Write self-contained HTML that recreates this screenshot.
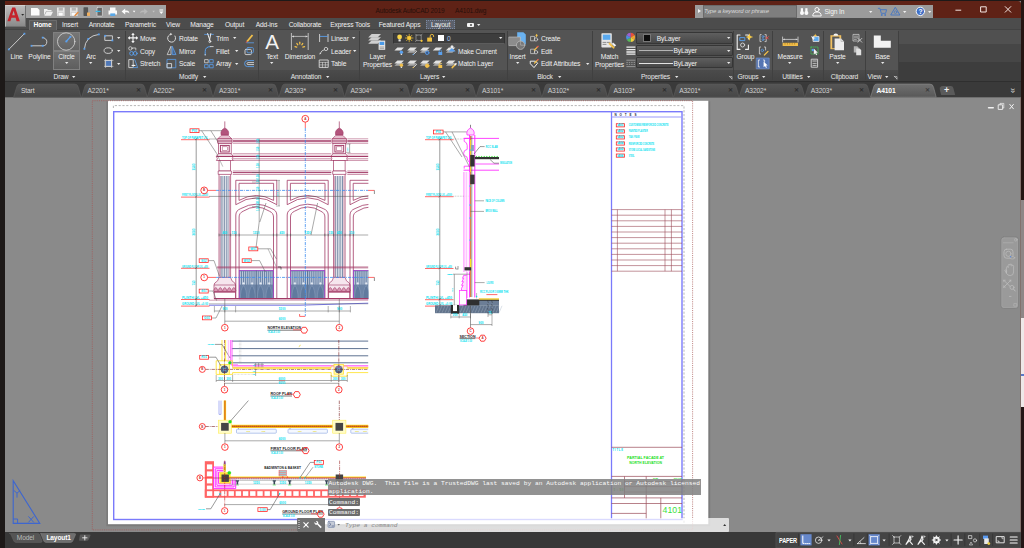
<!DOCTYPE html>
<html lang="en">
<head>
<meta charset="utf-8">
<title>Autodesk AutoCAD 2019 - A4101.dwg</title>
<style>
*{box-sizing:border-box;margin:0;padding:0}
html,body{width:1024px;height:548px;overflow:hidden;background:#1d1918}
body{position:relative;font-family:"Liberation Sans",sans-serif;font-size:7px;color:#e6e6e6;line-height:1}
.a{position:absolute;display:block}
.t{position:absolute;white-space:nowrap;line-height:9px;height:9px;font-size:6.7px;color:#f0f0f0;letter-spacing:-0.14px}
.tc{transform:translateX(-50%)}
.pt{color:#e8e8e8}
.sep{position:absolute;top:31px;width:1px;height:49px;background:#404040}
.dd{position:absolute;height:12px;background:#3b3b3b;border:1px solid #303030;border-radius:1px}
.arr{position:absolute;width:0;height:0;border-left:1.6px solid transparent;border-right:1.6px solid transparent;border-top:1.9px solid #e8e8e8}
svg{position:absolute;left:0;top:0;overflow:visible}
.mono{font-family:"Liberation Mono","DejaVu Sans Mono",monospace}
</style>
</head>
<body>
<div class="a" style="left:4.5px;top:1px;width:1016.5px;height:547px;background:#8a8a8a;"></div>
<div class="a" style="left:4.5px;top:1px;width:1016.5px;height:18px;background:#5f2216;border-radius:0 3px 0 0"></div>
<div class="a" style="left:26px;top:5px;width:140px;height:13px;background:#a2a2a2;"></div>
<div class="a" style="left:4.5px;top:18px;width:1016.5px;height:11px;background:#4c4c4c;"></div>
<div class="a" style="left:4.5px;top:29px;width:1016.5px;height:53px;background:#545454;"></div>
<div class="a" style="left:4.5px;top:29px;width:1016.5px;height:1px;background:#434343;"></div>
<div class="a" style="left:4.5px;top:70px;width:893.5px;height:12px;background:linear-gradient(#4b4b4b,#424242);"></div>
<div class="a" style="left:898px;top:30px;width:123px;height:14px;background:#505050;"></div>
<div class="a" style="left:898px;top:44px;width:123px;height:18px;background:#464646;"></div>
<div class="a" style="left:898px;top:62px;width:123px;height:20px;background:#3d3d3d;"></div>
<div class="a" style="left:4.5px;top:81px;width:1016.5px;height:1px;background:#2f2f2f;"></div>
<div class="a" style="left:4.5px;top:82px;width:1016.5px;height:15px;background:#3a3a3a;"></div>
<div class="a" style="left:4.5px;top:97px;width:1016.5px;height:1px;background:#6f6f6f;"></div>
<div class="a" style="left:4.5px;top:532.3px;width:1016.5px;height:15.7px;background:#383838;"></div>
<div class="a" style="left:5px;top:5.4px;width:21.4px;height:21.8px;background:linear-gradient(#bdbdbd,#8a8a8a);border:1px solid #707070;border-top-color:#d0d0d0;border-left-color:#c0c0c0"></div>
<span class="t " style="left:375.5px;top:6.0px;color:#26100b;font-size:6.5px">Autodesk AutoCAD 2019</span>
<span class="t " style="left:455px;top:6.0px;color:#26100b;font-size:6.5px">A4101.dwg</span>
<div class="a" style="left:695px;top:5px;width:8px;height:13px;background:#9c9c9c;"></div>
<div class="a" style="left:702.5px;top:5px;width:94.5px;height:13px;background:#7e7e7e;border:1px solid #6a6a6a"></div>
<div class="a" style="left:797px;top:5px;width:136px;height:13px;background:#9b9b9b;"></div>
<i class="a" style="left:697.5px;top:9px;border-left:3px solid #f2f2f2;border-top:2.5px solid transparent;border-bottom:2.5px solid transparent"></i>
<span class="t " style="left:704px;top:6.5px;font-style:italic;color:#d8d8d8;font-size:5.95px">Type a keyword or phrase</span>
<span class="t " style="left:824.5px;top:6.5px;color:#f4f4f4">Sign In</span>
<svg style="left:869.3px;top:10.5px" width="4" height="3" viewBox="0 0 4 3"><path d="M0 0 H3.4 L1.7 2.1 Z" fill="#f0f0f0"/></svg>
<svg style="left:902.8px;top:10.5px" width="4" height="3" viewBox="0 0 4 3"><path d="M0 0 H3.4 L1.7 2.1 Z" fill="#f0f0f0"/></svg>
<svg style="left:928.3px;top:10.5px" width="4" height="3" viewBox="0 0 4 3"><path d="M0 0 H3.4 L1.7 2.1 Z" fill="#f0f0f0"/></svg>
<div class="a" style="left:29px;top:20px;width:28px;height:10px;background:#5a5a5a;border:1px solid #6c6c6c;border-bottom:0;border-radius:1px 1px 0 0"></div>
<div class="a" style="left:426px;top:20px;width:29px;height:9px;background:#5b606b;border:1px dotted #7d8aa2"></div>
<span class="t tc " style="left:42.5px;top:20.0px;font-weight:bold;color:#fff">Home</span>
<span class="t tc " style="left:70px;top:20.0px;">Insert</span>
<span class="t tc " style="left:101.5px;top:20.0px;">Annotate</span>
<span class="t tc " style="left:140.5px;top:20.0px;">Parametric</span>
<span class="t tc " style="left:173px;top:20.0px;">View</span>
<span class="t tc " style="left:202px;top:20.0px;">Manage</span>
<span class="t tc " style="left:234.5px;top:20.0px;">Output</span>
<span class="t tc " style="left:266.5px;top:20.0px;">Add-ins</span>
<span class="t tc " style="left:305px;top:20.0px;">Collaborate</span>
<span class="t tc " style="left:350px;top:20.0px;">Express Tools</span>
<span class="t tc " style="left:399.5px;top:20.0px;">Featured Apps</span>
<span class="t tc " style="left:440.5px;top:20.0px;">Layout</span>
<div class="a" style="left:467px;top:22.5px;width:7px;height:4.5px;background:#f4f4f4;border-radius:1px"></div>
<div class="a" style="left:469.5px;top:24px;width:2px;height:1.5px;background:#4b4b4b;border-radius:1px"></div>
<svg style="left:476.8px;top:24.0px" width="4" height="3" viewBox="0 0 4 3"><path d="M0 0 H3.4 L1.7 2.1 Z" fill="#e8e8e8"/></svg>
<i class="sep" style="left:125px"></i>
<i class="sep" style="left:258px"></i>
<i class="sep" style="left:359px"></i>
<i class="sep" style="left:507px"></i>
<i class="sep" style="left:592px"></i>
<i class="sep" style="left:733px"></i>
<i class="sep" style="left:772px"></i>
<i class="sep" style="left:823px"></i>
<i class="sep" style="left:865px"></i>
<i class="sep" style="left:898px"></i>
<span class="t tc pt" style="left:61px;top:72.0px;">Draw</span>
<svg style="left:71.8px;top:76.0px" width="4" height="3" viewBox="0 0 4 3"><path d="M0 0 H3.4 L1.7 2.1 Z" fill="#e8e8e8"/></svg>
<span class="t tc pt" style="left:188.5px;top:72.0px;">Modify</span>
<svg style="left:202.8px;top:76.0px" width="4" height="3" viewBox="0 0 4 3"><path d="M0 0 H3.4 L1.7 2.1 Z" fill="#e8e8e8"/></svg>
<span class="t tc pt" style="left:306px;top:72.0px;">Annotation</span>
<svg style="left:325.8px;top:76.0px" width="4" height="3" viewBox="0 0 4 3"><path d="M0 0 H3.4 L1.7 2.1 Z" fill="#e8e8e8"/></svg>
<span class="t tc pt" style="left:429.5px;top:72.0px;">Layers</span>
<svg style="left:441.8px;top:76.0px" width="4" height="3" viewBox="0 0 4 3"><path d="M0 0 H3.4 L1.7 2.1 Z" fill="#e8e8e8"/></svg>
<span class="t tc pt" style="left:545px;top:72.0px;">Block</span>
<svg style="left:557.8px;top:76.0px" width="4" height="3" viewBox="0 0 4 3"><path d="M0 0 H3.4 L1.7 2.1 Z" fill="#e8e8e8"/></svg>
<span class="t tc pt" style="left:655.5px;top:72.0px;">Properties</span>
<svg style="left:674.8px;top:76.0px" width="4" height="3" viewBox="0 0 4 3"><path d="M0 0 H3.4 L1.7 2.1 Z" fill="#e8e8e8"/></svg>
<span class="t tc pt" style="left:748px;top:72.0px;">Groups</span>
<svg style="left:761.8px;top:76.0px" width="4" height="3" viewBox="0 0 4 3"><path d="M0 0 H3.4 L1.7 2.1 Z" fill="#e8e8e8"/></svg>
<span class="t tc pt" style="left:792.5px;top:72.0px;">Utilities</span>
<svg style="left:806.8px;top:76.0px" width="4" height="3" viewBox="0 0 4 3"><path d="M0 0 H3.4 L1.7 2.1 Z" fill="#e8e8e8"/></svg>
<span class="t tc pt" style="left:844.5px;top:72.0px;">Clipboard</span>
<span class="t tc pt" style="left:874.5px;top:72.0px;">View</span>
<svg style="left:884.8px;top:76.0px" width="4" height="3" viewBox="0 0 4 3"><path d="M0 0 H3.4 L1.7 2.1 Z" fill="#e8e8e8"/></svg>
<div class="a" style="left:53px;top:32px;width:27px;height:19px;background:linear-gradient(#767676,#636363);border:1px solid #808080"></div>
<div class="a" style="left:53px;top:51px;width:27px;height:19px;background:linear-gradient(#707070,#5e5e5e);border:1px solid #808080"></div>
<span class="t tc " style="left:16.5px;top:52.0px;">Line</span>
<span class="t tc " style="left:39.5px;top:52.0px;">Polyline</span>
<span class="t tc " style="left:66.5px;top:52.0px;">Circle</span>
<span class="t tc " style="left:91px;top:52.0px;">Arc</span>
<svg style="left:64.8px;top:61.5px" width="4" height="3" viewBox="0 0 4 3"><path d="M0 0 H3.4 L1.7 2.1 Z" fill="#e8e8e8"/></svg>
<svg style="left:89.3px;top:61.5px" width="4" height="3" viewBox="0 0 4 3"><path d="M0 0 H3.4 L1.7 2.1 Z" fill="#e8e8e8"/></svg>
<svg style="left:116.8px;top:37.1px" width="4" height="3" viewBox="0 0 4 3"><path d="M0 0 H3.4 L1.7 2.1 Z" fill="#e8e8e8"/></svg>
<svg style="left:116.8px;top:50.0px" width="4" height="3" viewBox="0 0 4 3"><path d="M0 0 H3.4 L1.7 2.1 Z" fill="#e8e8e8"/></svg>
<svg style="left:116.8px;top:62.6px" width="4" height="3" viewBox="0 0 4 3"><path d="M0 0 H3.4 L1.7 2.1 Z" fill="#e8e8e8"/></svg>
<span class="t " style="left:140px;top:33.6px;">Move</span>
<span class="t " style="left:140px;top:46.5px;">Copy</span>
<span class="t " style="left:140px;top:59.1px;">Stretch</span>
<span class="t " style="left:179px;top:33.6px;">Rotate</span>
<span class="t " style="left:179px;top:46.5px;">Mirror</span>
<span class="t " style="left:179px;top:59.1px;">Scale</span>
<span class="t " style="left:216px;top:33.6px;">Trim</span>
<svg style="left:233.3px;top:37.1px" width="4" height="3" viewBox="0 0 4 3"><path d="M0 0 H3.4 L1.7 2.1 Z" fill="#e8e8e8"/></svg>
<span class="t " style="left:216px;top:46.5px;">Fillet</span>
<svg style="left:234.8px;top:50.0px" width="4" height="3" viewBox="0 0 4 3"><path d="M0 0 H3.4 L1.7 2.1 Z" fill="#e8e8e8"/></svg>
<span class="t " style="left:216px;top:59.1px;">Array</span>
<svg style="left:234.8px;top:62.6px" width="4" height="3" viewBox="0 0 4 3"><path d="M0 0 H3.4 L1.7 2.1 Z" fill="#e8e8e8"/></svg>
<span class="t tc " style="left:272px;top:52.0px;">Text</span>
<svg style="left:270.3px;top:61.5px" width="4" height="3" viewBox="0 0 4 3"><path d="M0 0 H3.4 L1.7 2.1 Z" fill="#e8e8e8"/></svg>
<span class="t tc " style="left:300px;top:52.0px;">Dimension</span>
<span class="t " style="left:331px;top:33.6px;">Linear</span>
<svg style="left:351.8px;top:37.1px" width="4" height="3" viewBox="0 0 4 3"><path d="M0 0 H3.4 L1.7 2.1 Z" fill="#e8e8e8"/></svg>
<span class="t " style="left:331px;top:46.5px;">Leader</span>
<svg style="left:353.3px;top:50.0px" width="4" height="3" viewBox="0 0 4 3"><path d="M0 0 H3.4 L1.7 2.1 Z" fill="#e8e8e8"/></svg>
<span class="t " style="left:331px;top:59.1px;">Table</span>
<span class="t tc" style="left:272px;top:31.6px;font-size:20.6px;line-height:20px;height:20px;color:#f2f2f2">A</span>
<span class="t tc " style="left:377.5px;top:52.0px;">Layer</span>
<span class="t tc " style="left:377.5px;top:60.0px;">Properties</span>
<i class="dd" style="left:393px;top:32.6px;width:111.6px;height:11px;background:#3d3d3d;border-color:#333 #333 #5c5c5c #333"></i>
<div class="a" style="left:437.8px;top:34.8px;width:6.6px;height:6.6px;background:#fff;"></div>
<span class="t " style="left:447px;top:33.6px;color:#a8c8f0">0</span>
<svg style="left:499.0px;top:37.3px" width="4" height="3" viewBox="0 0 4 3"><path d="M0 0 H3.4 L1.7 2.1 Z" fill="#e8e8e8"/></svg>
<span class="t " style="left:458px;top:46.5px;">Make Current</span>
<span class="t " style="left:458px;top:59.1px;">Match Layer</span>
<span class="t tc " style="left:517.5px;top:52.0px;">Insert</span>
<svg style="left:515.8px;top:61.5px" width="4" height="3" viewBox="0 0 4 3"><path d="M0 0 H3.4 L1.7 2.1 Z" fill="#e8e8e8"/></svg>
<span class="t " style="left:541px;top:33.6px;">Create</span>
<span class="t " style="left:541px;top:46.5px;">Edit</span>
<span class="t " style="left:541px;top:59.1px;">Edit Attributes</span>
<svg style="left:585.8px;top:62.6px" width="4" height="3" viewBox="0 0 4 3"><path d="M0 0 H3.4 L1.7 2.1 Z" fill="#e8e8e8"/></svg>
<span class="t tc " style="left:609.5px;top:52.0px;">Match</span>
<span class="t tc " style="left:609.5px;top:60.0px;">Properties</span>
<i class="dd" style="left:636.4px;top:32.4px;width:96.6px;height:11.2px;background:linear-gradient(#5f5f5f,#484848);border-color:#363636"></i>
<svg style="left:727.3px;top:37.4px" width="4" height="3" viewBox="0 0 4 3"><path d="M0 0 H3.4 L1.7 2.1 Z" fill="#e8e8e8"/></svg>
<i class="dd" style="left:636.4px;top:44.8px;width:96.6px;height:11.2px;background:linear-gradient(#5f5f5f,#484848);border-color:#363636"></i>
<svg style="left:727.3px;top:49.8px" width="4" height="3" viewBox="0 0 4 3"><path d="M0 0 H3.4 L1.7 2.1 Z" fill="#e8e8e8"/></svg>
<i class="dd" style="left:636.4px;top:57.2px;width:96.6px;height:11.2px;background:linear-gradient(#5f5f5f,#484848);border-color:#363636"></i>
<svg style="left:727.3px;top:62.2px" width="4" height="3" viewBox="0 0 4 3"><path d="M0 0 H3.4 L1.7 2.1 Z" fill="#e8e8e8"/></svg>
<div class="a" style="left:643.4px;top:33.8px;width:8px;height:8.2px;background:#0c0c0c;border:1px solid #777"></div>
<span class="t " style="left:656.8px;top:33.7px;">ByLayer</span>
<span class="t " style="left:673.4px;top:46.0px;">ByLayer</span>
<span class="t " style="left:673.4px;top:58.7px;">ByLayer</span>
<div class="a" style="left:638.6px;top:49.8px;width:34px;height:1.4px;background:#b4b4b4;"></div>
<div class="a" style="left:638.6px;top:62.8px;width:34px;height:0.9px;background:#e4e4e4;"></div>
<span class="t tc " style="left:745.5px;top:52.0px;">Group</span>
<span class="t tc " style="left:790px;top:52.0px;">Measure</span>
<svg style="left:788.3px;top:61.5px" width="4" height="3" viewBox="0 0 4 3"><path d="M0 0 H3.4 L1.7 2.1 Z" fill="#e8e8e8"/></svg>
<span class="t tc " style="left:837.5px;top:52.0px;">Paste</span>
<svg style="left:835.8px;top:61.5px" width="4" height="3" viewBox="0 0 4 3"><path d="M0 0 H3.4 L1.7 2.1 Z" fill="#e8e8e8"/></svg>
<span class="t tc " style="left:882.5px;top:52.0px;">Base</span>
<svg style="left:880.8px;top:61.5px" width="4" height="3" viewBox="0 0 4 3"><path d="M0 0 H3.4 L1.7 2.1 Z" fill="#e8e8e8"/></svg>
<svg width="0" height="0"><defs><linearGradient id="tgI" x1="0" y1="0" x2="0" y2="1"><stop offset="0" stop-color="#565656"/><stop offset="1" stop-color="#464646"/></linearGradient><linearGradient id="tgA" x1="0" y1="0" x2="0" y2="1"><stop offset="0" stop-color="#707070"/><stop offset="1" stop-color="#585858"/></linearGradient></defs></svg>
<svg width="1024" height="100" viewBox="0 0 1024 100"><path d="M13.6 97.2 L17.0 86 Q17.6 84 20.0 84 H74.4 Q77.80000000000001 84 78.4 87.4 L81.0 97.2 Z" fill="url(#tgI)" stroke="#5c5c5c" stroke-width=".6"/></svg>
<span class="t " style="left:21px;top:86.0px;color:#dadada">Start</span>
<svg width="1024" height="100" viewBox="0 0 1024 100"><path d="M81.6 97.2 L85.0 86 Q85.6 84 88.0 84 H140.6 Q144.0 84 144.6 87.4 L147.2 97.2 Z" fill="url(#tgI)" stroke="#5c5c5c" stroke-width=".6"/></svg>
<span class="t " style="left:87.5px;top:86.0px;color:#cfcfcf">A2201*</span>
<span class="t " style="left:136.0px;top:86.0px;font-size:5.5px;color:#2c2c2c;font-weight:bold">✕</span>
<svg width="1024" height="100" viewBox="0 0 1024 100"><path d="M147.3 97.2 L150.70000000000002 86 Q151.3 84 153.70000000000002 84 H206.3 Q209.70000000000002 84 210.3 87.4 L212.9 97.2 Z" fill="url(#tgI)" stroke="#5c5c5c" stroke-width=".6"/></svg>
<span class="t " style="left:153.2px;top:86.0px;color:#cfcfcf">A2202*</span>
<span class="t " style="left:201.8px;top:86.0px;font-size:5.5px;color:#2c2c2c;font-weight:bold">✕</span>
<svg width="1024" height="100" viewBox="0 0 1024 100"><path d="M213.1 97.2 L216.5 86 Q217.1 84 219.5 84 H272.1 Q275.5 84 276.1 87.4 L278.70000000000005 97.2 Z" fill="url(#tgI)" stroke="#5c5c5c" stroke-width=".6"/></svg>
<span class="t " style="left:219.0px;top:86.0px;color:#cfcfcf">A2301*</span>
<span class="t " style="left:267.5px;top:86.0px;font-size:5.5px;color:#2c2c2c;font-weight:bold">✕</span>
<svg width="1024" height="100" viewBox="0 0 1024 100"><path d="M278.9 97.2 L282.29999999999995 86 Q282.9 84 285.29999999999995 84 H337.9 Q341.29999999999995 84 341.9 87.4 L344.5 97.2 Z" fill="url(#tgI)" stroke="#5c5c5c" stroke-width=".6"/></svg>
<span class="t " style="left:284.8px;top:86.0px;color:#cfcfcf">A2303*</span>
<span class="t " style="left:333.2px;top:86.0px;font-size:5.5px;color:#2c2c2c;font-weight:bold">✕</span>
<svg width="1024" height="100" viewBox="0 0 1024 100"><path d="M344.6 97.2 L348.0 86 Q348.6 84 351.0 84 H403.6 Q407.0 84 407.6 87.4 L410.20000000000005 97.2 Z" fill="url(#tgI)" stroke="#5c5c5c" stroke-width=".6"/></svg>
<span class="t " style="left:350.5px;top:86.0px;color:#cfcfcf">A2304*</span>
<span class="t " style="left:399.0px;top:86.0px;font-size:5.5px;color:#2c2c2c;font-weight:bold">✕</span>
<svg width="1024" height="100" viewBox="0 0 1024 100"><path d="M410.4 97.2 L413.79999999999995 86 Q414.4 84 416.79999999999995 84 H469.4 Q472.79999999999995 84 473.4 87.4 L476.0 97.2 Z" fill="url(#tgI)" stroke="#5c5c5c" stroke-width=".6"/></svg>
<span class="t " style="left:416.2px;top:86.0px;color:#cfcfcf">A2305*</span>
<span class="t " style="left:464.8px;top:86.0px;font-size:5.5px;color:#2c2c2c;font-weight:bold">✕</span>
<svg width="1024" height="100" viewBox="0 0 1024 100"><path d="M476.1 97.2 L479.5 86 Q480.1 84 482.5 84 H535.1 Q538.5 84 539.1 87.4 L541.7 97.2 Z" fill="url(#tgI)" stroke="#5c5c5c" stroke-width=".6"/></svg>
<span class="t " style="left:482.0px;top:86.0px;color:#cfcfcf">A3101*</span>
<span class="t " style="left:530.5px;top:86.0px;font-size:5.5px;color:#2c2c2c;font-weight:bold">✕</span>
<svg width="1024" height="100" viewBox="0 0 1024 100"><path d="M541.9 97.2 L545.3 86 Q545.9 84 548.3 84 H600.9 Q604.3 84 604.9 87.4 L607.5 97.2 Z" fill="url(#tgI)" stroke="#5c5c5c" stroke-width=".6"/></svg>
<span class="t " style="left:547.8px;top:86.0px;color:#cfcfcf">A3102*</span>
<span class="t " style="left:596.2px;top:86.0px;font-size:5.5px;color:#2c2c2c;font-weight:bold">✕</span>
<svg width="1024" height="100" viewBox="0 0 1024 100"><path d="M607.6 97.2 L611.0 86 Q611.6 84 614.0 84 H666.6 Q670.0 84 670.6 87.4 L673.2 97.2 Z" fill="url(#tgI)" stroke="#5c5c5c" stroke-width=".6"/></svg>
<span class="t " style="left:613.5px;top:86.0px;color:#cfcfcf">A3103*</span>
<span class="t " style="left:662.0px;top:86.0px;font-size:5.5px;color:#2c2c2c;font-weight:bold">✕</span>
<svg width="1024" height="100" viewBox="0 0 1024 100"><path d="M673.4 97.2 L676.8 86 Q677.4 84 679.8 84 H732.4 Q735.8 84 736.4 87.4 L739.0 97.2 Z" fill="url(#tgI)" stroke="#5c5c5c" stroke-width=".6"/></svg>
<span class="t " style="left:679.2px;top:86.0px;color:#cfcfcf">A3201*</span>
<span class="t " style="left:727.8px;top:86.0px;font-size:5.5px;color:#2c2c2c;font-weight:bold">✕</span>
<svg width="1024" height="100" viewBox="0 0 1024 100"><path d="M739.1 97.2 L742.5 86 Q743.1 84 745.5 84 H798.1 Q801.5 84 802.1 87.4 L804.7 97.2 Z" fill="url(#tgI)" stroke="#5c5c5c" stroke-width=".6"/></svg>
<span class="t " style="left:745.0px;top:86.0px;color:#cfcfcf">A3202*</span>
<span class="t " style="left:793.5px;top:86.0px;font-size:5.5px;color:#2c2c2c;font-weight:bold">✕</span>
<svg width="1024" height="100" viewBox="0 0 1024 100"><path d="M804.9 97.2 L808.3 86 Q808.9 84 811.3 84 H863.9 Q867.3 84 867.9 87.4 L870.5 97.2 Z" fill="url(#tgI)" stroke="#5c5c5c" stroke-width=".6"/></svg>
<span class="t " style="left:810.8px;top:86.0px;color:#cfcfcf">A3203*</span>
<span class="t " style="left:859.2px;top:86.0px;font-size:5.5px;color:#2c2c2c;font-weight:bold">✕</span>
<svg width="1024" height="100" viewBox="0 0 1024 100"><path d="M870.6 97.2 L874.0 86 Q874.6 84 877.0 84 H929.6 Q933.0 84 933.6 87.4 L936.2 97.2 Z" fill="url(#tgA)" stroke="#8c8c8c" stroke-width=".6"/></svg>
<span class="t " style="left:876.5px;top:86.0px;color:#fff;font-weight:bold">A4101</span>
<span class="t " style="left:925.0px;top:86.0px;font-size:5.5px;color:#3a3a3a;font-weight:bold">✕</span>
<i class="a" style="left:940px;top:86px;width:14px;height:9px;background:#5a5a5a;border-radius:4px 2px 0 0;transform:skewX(15deg)"></i>
<span class="t " style="left:944px;top:86.0px;font-size:9px;font-weight:bold;color:#eee">+</span>
<span class="t " style="left:1010px;top:85.5px;font-size:9px;color:#ddd;transform:rotate(90deg)">»</span>
<svg width="1024" height="100" viewBox="0 0 1024 100" fill="none" stroke-linecap="round" stroke-linejoin="round">
<path d="M7.4 21.2 L12.2 7.6 L15.2 7.6 L19.8 21.2 L16.6 21.2 L15.6 17.8 L11.4 17.8 L10.4 21.2 Z M12.2 15.2 L14.9 15.2 L13.6 10.8 Z" fill="#c4242c" fill-rule="evenodd"/>
<path d="M21.2 14 l3 0 l-1.5 1.8 z" fill="#2a2a2a"/>
<g fill="#fbfbfb">
<path d="M31 8 h6.5 l2 2 v5.5 h-8.5 z"/>
<path d="M44 9 h3 l1 1 h3.5 v1.2 h-5.5 l-2 4.3 z M46.6 11.8 h6.4 l-2 3.9 h-6.6 z" fill="#f0f0f0"/>
<rect x="57" y="7.5" width="7.6" height="8.5" fill="#e6e6e6"/><rect x="58.7" y="7.5" width="4.2" height="3.1" fill="#b4b4b4"/><rect x="58.5" y="12.4" width="4.6" height="3.6" fill="#fdfdfd" stroke="#b0b0b0" stroke-width=".5"/>
<rect x="70" y="7.5" width="7.6" height="8.5" fill="#e2e2e2"/><rect x="71.7" y="7.5" width="4.2" height="3.1" fill="#b4b4b4"/><rect x="71.5" y="12.4" width="4.6" height="3.6" fill="#fbfbfb" stroke="#b0b0b0" stroke-width=".5"/>
</g>
<path d="M75 15.5 l3 -3" stroke="#e88a3a" stroke-width="1.4"/>
<rect x="83.5" y="7.3" width="4.6" height="8.6" rx=".6" fill="#555"/><rect x="87" y="12.5" width="3" height="3.4" fill="#f0b060"/>
<rect x="97" y="7.3" width="5.4" height="8.8" rx=".7" fill="#666" stroke="#ddd" stroke-width=".7"/><path d="M96 11.3 h4" stroke="#38b6e8" stroke-width="1.3"/>
<path d="M108.5 10.5 h8.5 v4 h-8.5 z M110 7.5 h5.5 v3 h-5.5 z" fill="#fafafa"/><rect x="110.3" y="13.4" width="4.9" height="2.6" fill="#58a8e8"/>
<path d="M121.6 11.6 l3.6 -3 v2 h1.5 q2.6 0 2.6 3 q-.8 -1.3 -2.6 -1.3 h-1.5 v2.2 z" fill="#fbfbfb"/>
<path d="M147.8 11.6 l-3.6 -3 v2 h-1.5 q-2.6 0 -2.6 3 q.8 -1.3 2.6 -1.3 h1.5 v2.2 z" fill="#b8b8b8"/>
<path d="M132.8 10.8 h2.6 l-1.3 1.7 z" fill="#fff"/><path d="M152.3 10.8 h2.6 l-1.3 1.7 z" fill="#c4c4c4"/>
<path d="M159.4 9.6 h3.8 v.9 h-3.8 z M159.2 11.5 h4.2 l-2.1 2.6 z" fill="#fdfdfd"/>
<g fill="#fafafa"><circle cx="802" cy="13" r="2"/><circle cx="806.4" cy="13" r="2"/><rect x="800.8" y="8.2" width="2.2" height="4"/><rect x="805.3" y="8.2" width="2.2" height="4"/></g>
<circle cx="817" cy="9.6" r="2.1" stroke="#fff" stroke-width=".9"/><path d="M812.8 15.6 q0 -3.6 4.2 -3.6 q4.2 0 4.2 3.6 z" stroke="#fff" stroke-width=".9"/>
<path d="M878.3 8.3 h1.6 l1.4 5 h4.3 l1 -3.6 h-6" stroke="#4a78c0" stroke-width="1"/><circle cx="881.8" cy="15" r=".9" fill="#4a78c0"/><circle cx="885.2" cy="15" r=".9" fill="#4a78c0"/>
<path d="M895.5 7.6 l4.4 7.4 h-8.8 z" stroke="#4a78c0" stroke-width="1"/><circle cx="895.5" cy="12.2" r="1.3" stroke="#4a78c0" stroke-width=".8"/>
<circle cx="920.4" cy="11.4" r="4.2" fill="#3f6fc6" stroke="#fff" stroke-width=".9"/><text x="920.4" y="13.8" font-family="Liberation Sans, sans-serif" font-size="6.6" font-weight="bold" fill="#fff" text-anchor="middle">?</text>
<path d="M955.8 10.2 h5" stroke="#f4e6e2" stroke-width="1"/><rect x="981" y="6.8" width="5.2" height="5.2" stroke="#f4e6e2" stroke-width="1"/><path d="M1005.2 6.6 l5.6 5.6 M1010.8 6.6 l-5.6 5.6" stroke="#f4e6e2" stroke-width="1"/>
<path d="M8.8 49.4 L24.4 33.7" stroke="#d8d8d8" stroke-width=".9"/>
<path d="M31.5 45.8 H42.7 A4.1 4.1 0 0 0 42.7 37.6" stroke="#d8d8d8" stroke-width=".9"/>
<circle cx="66.2" cy="41.5" r="8.7" stroke="#d8d8d8" stroke-width=".8"/><path d="M66.2 41.5 L70.6 36.6" stroke="#5aa0ee" stroke-width="1.3"/>
<path d="M84.4 48.8 Q85.2 36 98.8 34.4" stroke="#d8d8d8" stroke-width=".9"/>
<rect x="105.2" y="35.8" width="7.2" height="4.6" stroke="#d8d8d8" stroke-width=".9"/>
<ellipse cx="108.2" cy="50.6" rx="4.1" ry="2.8" stroke="#d8d8d8" stroke-width=".9"/>
<rect x="105.6" y="60.4" width="6" height="6" fill="#4f78b8" stroke="#d8d8d8" stroke-width=".8"/><path d="M104.4 60.4 h8.6 M104.4 66.4 h8.6 M105.6 59.2 v8.4 M111.6 59.2 v8.4" stroke="#d8d8d8" stroke-width=".6"/>
<g fill="#5aa0ee">
<rect x="7.9" y="48.5" width="1.8" height="1.8"/>
<rect x="23.5" y="32.8" width="1.8" height="1.8"/>
<rect x="30.6" y="44.9" width="1.8" height="1.8"/>
<rect x="41.8" y="44.9" width="1.8" height="1.8"/>
<rect x="41.8" y="36.7" width="1.8" height="1.8"/>
<rect x="83.5" y="47.9" width="1.8" height="1.8"/>
<rect x="87.4" y="38.0" width="1.8" height="1.8"/>
<rect x="97.9" y="33.5" width="1.8" height="1.8"/>
<rect x="104.3" y="34.9" width="1.8" height="1.8"/>
<rect x="111.5" y="39.5" width="1.8" height="1.8"/>
<rect x="69.5" y="35.9" width="1.8" height="1.8"/>
<rect x="65.5" y="40.5" width="1.8" height="1.8"/>
</g>
<path d="M128.8 37.9 h8.4 M133 33.7 v8.4" stroke="#f4f4f4" stroke-width="1.1"/><path d="M133 32.9 l1.8 2 h-3.6 z M133 42.9 l1.8 -2 h-3.6 z M128 37.9 l2 -1.8 v3.6 z M138 37.9 l-2 -1.8 v3.6 z" fill="#f4f4f4"/>
<circle cx="130.4" cy="48.4" r="1.7" stroke="#d8d8d8" stroke-width=".8"/><path d="M132.2 48 h3.6 v2" stroke="#d8d8d8" stroke-width=".8"/><circle cx="131.6" cy="53.4" r="1.9" stroke="#5aa0ee" stroke-width=".9"/><circle cx="135.2" cy="53.4" r="1.9" stroke="#5aa0ee" stroke-width=".9"/>
<path d="M129.2 59.6 h4 v8 h-4 z" stroke="#d8d8d8" stroke-width=".9"/><path d="M133.2 59.6 h1.6 l2.8 8 h-4.4" stroke="#5aa0ee" stroke-width=".8"/><path d="M132 65.4 h3" stroke="#fff" stroke-width="1"/>
<path d="M175 36 A4 4 0 1 1 171 34.2" stroke="#d8d8d8" stroke-width="1"/><path d="M170.2 32.8 l2.2 1.4 l-2.2 1.4 z" fill="#d8d8d8"/>
<path d="M171 46.6 v8 h-3.4 z" stroke="#d8d8d8" stroke-width=".8"/><path d="M172.2 46.6 v8 h3.4 z" stroke="#5aa0ee" stroke-width=".8" fill="#4a6690"/>
<rect x="167.4" y="59.4" width="8.4" height="8.4" stroke="#5aa0ee" stroke-width=".8"/><rect x="167.4" y="63.6" width="4.2" height="4.2" stroke="#d8d8d8" stroke-width=".9"/>
<path d="M204.6 34.4 h4.4 M211 34.4 h2.4" stroke="#5aa0ee" stroke-width=".8"/><path d="M207.6 33.6 l2.6 7.6 M210.8 33.6 l-1.4 7" stroke="#f0f0f0" stroke-width="1"/><circle cx="209.8" cy="41.6" r="1" stroke="#f0f0f0" stroke-width=".7"/>
<path d="M205.2 55 v-3.6 q0 -4.8 5.2 -4.8" stroke="#5aa0ee" stroke-width="1"/><path d="M210.4 46.6 h2.8 M205.2 55 v-.6" stroke="#d8d8d8" stroke-width=".9"/>
<rect x="205" y="59.6" width="3.2" height="3.2" stroke="#d8d8d8" stroke-width=".8"/>
<rect x="205" y="64.6" width="3.2" height="3.2" stroke="#5aa0ee" stroke-width=".8"/>
<rect x="210" y="59.6" width="3.2" height="3.2" stroke="#5aa0ee" stroke-width=".8"/>
<rect x="210" y="64.6" width="3.2" height="3.2" stroke="#5aa0ee" stroke-width=".8"/>
<path d="M246.4 41 l5.4 -6.6 l1.4 1.1 l-5.4 6.6 z" fill="#f2c04a"/><path d="M246.4 41 l1.4 1.1 l-2.2 .9 z" fill="#e05050"/><path d="M247 42.8 h6.6" stroke="#5aa0ee" stroke-width=".8"/>
<rect x="245" y="49.4" width="6.4" height="5.2" rx="1" stroke="#d8d8d8" stroke-width=".9"/><rect x="247" y="47.6" width="6.4" height="5.2" rx="1" stroke="#5aa0ee" stroke-width=".8"/>
<path d="M253.6 60.6 h-6 a3 3 0 0 0 0 6 h6" stroke="#5aa0ee" stroke-width=".9"/><path d="M253.6 62.6 h-5.6 a1 1 0 0 0 0 2 h5.6" stroke="#d8d8d8" stroke-width=".9"/>
<path d="M291.4 33.4 v16.2 M308.2 33.4 v16.2" stroke="#d8d8d8" stroke-width=".8"/><path d="M292.4 36.4 h14.8" stroke="#d8d8d8" stroke-width=".7"/><path d="M292 36.4 l2 -1 v2 z M307.6 36.4 l-2 -1 v2 z" fill="#d8d8d8"/>
<g stroke="#f2c04a" stroke-width="1.2"><path d="M299.8 42.2 v1.8"/><path d="M296.8 43.4 l1 1.4"/><path d="M302.8 43.4 l-1 1.4"/><path d="M295 46.6 l1.8 .5"/><path d="M304.6 46.6 l-1.8 .5"/></g>
<path d="M319.6 34.4 v7.2 M328 34.4 v7.2" stroke="#d8d8d8" stroke-width=".9"/><path d="M320.4 36.4 h7" stroke="#5aa0ee" stroke-width=".9"/>
<circle cx="326" cy="49" r="1.7" stroke="#d8d8d8" stroke-width=".8"/><path d="M324.4 49.6 q-3 .4 -4.4 4.2" stroke="#d8d8d8" stroke-width=".8"/><path d="M319.6 54.6 l.3 -2 l1.4 1 z" fill="#d8d8d8"/>
<rect x="319.6" y="60" width="8.6" height="7.4" stroke="#d8d8d8" stroke-width=".9"/><path d="M319.6 62.4 h8.6 M319.6 64.9 h8.6 M322.5 62.4 v5 M325.4 62.4 v5" stroke="#d8d8d8" stroke-width=".6"/>
<path d="M371.6 34 h9.4 l-3.4 3.4 h-9.4 z" fill="#cfcfcf"/>
<path d="M371.6 37.2 h9.4 l-3.4 3.4 h-9.4 z" fill="#cfcfcf"/>
<path d="M371.6 40.4 h9.4 l-3.4 3.4 h-9.4 z" fill="#cfcfcf"/>
<rect x="378.6" y="40.6" width="6.6" height="9.2" fill="#e4e4e4"/><rect x="379.6" y="41.8" width="4.6" height="3.2" fill="#4a9ae8"/><path d="M380 47 h3.8 M380 48.4 h3.8" stroke="#666" stroke-width=".5"/>
<circle cx="399.6" cy="37" r="2.4" fill="#f8d54a"/><rect x="398.5" y="39.4" width="2.2" height="2" fill="#e8e8e8"/>
<circle cx="409.2" cy="38" r="2.1" fill="#f8c838"/><path d="M409.2 34.2 v7.6 M405.4 38 h7.6 M406.5 35.3 l5.4 5.4 M411.9 35.3 l-5.4 5.4" stroke="#f8c838" stroke-width=".7"/>
<rect x="416.4" y="35" width="4.8" height="5.6" stroke="#9a9a9a" stroke-width=".8"/><path d="M415.4 34 l1.6 1.6 M422.2 34 l-1.6 1.6 M415.4 41.6 l1.6 -1.6" stroke="#9a9a9a" stroke-width=".7"/><circle cx="421.6" cy="40.8" r="1.1" fill="#f8c838"/>
<rect x="427.2" y="37.6" width="4.8" height="4" fill="#f0c040"/><path d="M430.2 37.6 v-1.6 a1.7 1.7 0 0 1 3.4 0 v.6" stroke="#f0c040" stroke-width=".9"/>
<path d="M397.40000000000003 47.6 h6.6 l-3 2.8 h-6.6 z" fill="#e2e2e2"/>
<path d="M410.2 50.0 h6.6 l-3 2.8 h-6.6 z" fill="#a8a8a8"/>
<path d="M410.2 47.6 h6.6 l-3 2.8 h-6.6 z" fill="#e2e2e2"/>
<path d="M423.0 50.0 h6.6 l-3 2.8 h-6.6 z" fill="#a8a8a8"/>
<path d="M423.0 47.6 h6.6 l-3 2.8 h-6.6 z" fill="#e2e2e2"/>
<path d="M435.8 47.6 h6.6 l-3 2.8 h-6.6 z" fill="#e2e2e2"/>
<path d="M448.8 50.0 h6.6 l-3 2.8 h-6.6 z" fill="#a8a8a8"/>
<path d="M448.8 47.6 h6.6 l-3 2.8 h-6.6 z" fill="#e2e2e2"/>
<circle cx="401.40000000000003" cy="52.2" r="1.7" fill="#5aa0ee"/><rect x="400.70000000000005" y="53.7" width="1.4" height="1.3" fill="#ddd"/>
<path d="M413.2 54.6 l3.2 -3.2" stroke="#f4f4f4" stroke-width="1"/><path d="M413.0 54.800000000000004 l.8 -.8" stroke="#5aa0ee" stroke-width="1"/>
<circle cx="427.2" cy="52.800000000000004" r="1.8" fill="#3c5c8c" stroke="#5aa0ee" stroke-width=".8"/>
<rect x="438.4" y="52.0" width="3.8" height="3" fill="#5aa0ee"/><path d="M439.2 52.0 v-1 a1.1 1.1 0 0 1 2.2 0 v1" stroke="#5aa0ee" stroke-width=".7"/>
<path d="M397.40000000000003 63.0 h6.6 l-3 2.8 h-6.6 z" fill="#a8a8a8"/>
<path d="M397.40000000000003 60.6 h6.6 l-3 2.8 h-6.6 z" fill="#e2e2e2"/>
<path d="M410.2 63.0 h6.6 l-3 2.8 h-6.6 z" fill="#a8a8a8"/>
<path d="M410.2 60.6 h6.6 l-3 2.8 h-6.6 z" fill="#e2e2e2"/>
<path d="M423.0 63.0 h6.6 l-3 2.8 h-6.6 z" fill="#a8a8a8"/>
<path d="M423.0 60.6 h6.6 l-3 2.8 h-6.6 z" fill="#e2e2e2"/>
<path d="M435.8 63.0 h6.6 l-3 2.8 h-6.6 z" fill="#a8a8a8"/>
<path d="M435.8 60.6 h6.6 l-3 2.8 h-6.6 z" fill="#e2e2e2"/>
<path d="M448.8 63.0 h6.6 l-3 2.8 h-6.6 z" fill="#a8a8a8"/>
<path d="M448.8 60.6 h6.6 l-3 2.8 h-6.6 z" fill="#e2e2e2"/>
<circle cx="401.40000000000003" cy="65.2" r="1.7" fill="#f2c04a"/><rect x="400.70000000000005" y="66.7" width="1.4" height="1.3" fill="#ddd"/>
<path d="M413.2 67.6 l3.2 -3.2" stroke="#f4f4f4" stroke-width="1"/><path d="M413.0 67.8 l.8 -.8" stroke="#f2c04a" stroke-width="1"/>
<circle cx="427.2" cy="65.8" r="1.8" fill="#f2c04a" stroke="#f2c04a" stroke-width=".8"/>
<rect x="438.4" y="65.0" width="3.8" height="3" fill="#f2c04a"/><path d="M439.2 65.0 v-1 a1.1 1.1 0 0 1 2.2 0 v0" stroke="#f2c04a" stroke-width=".7"/>
<path d="M448.4 51.6 l3.4 -3.6 l3.8 3.6 z" fill="#5aa0ee"/><circle cx="452" cy="46.8" r="1.5" fill="#ececec"/>
<path d="M452.2 67.6 l3.4 -3.4" stroke="#f2c04a" stroke-width="1.5"/><path d="M455 64.8 l1 -1" stroke="#f4f4f4" stroke-width="1.5"/>
<path d="M517.2 32.2 h6.2 l2.4 2.4 v9.8 h-8.6 z" fill="#6ab2f0"/><rect x="509.2" y="37" width="11.2" height="8.6" fill="#8c8c8c" stroke="#c8c8c8" stroke-width=".6"/><circle cx="520.6" cy="45.2" r="4.2" fill="#777" stroke="#b8b8b8" stroke-width=".8"/><path d="M520.6 41.4 v3.8 h3.6" stroke="#b8b8b8" stroke-width=".6"/>
<rect x="531" y="36.4" width="3.6" height="4.4" stroke="#d8d8d8" stroke-width=".7"/><circle cx="536" cy="39.4" r="1.7" stroke="#d8d8d8" stroke-width=".7"/>
<rect x="531" y="49.199999999999996" width="3.6" height="4.4" stroke="#d8d8d8" stroke-width=".7"/><circle cx="536" cy="52.199999999999996" r="1.7" stroke="#d8d8d8" stroke-width=".7"/>
<path d="M535.4 35.6 l1.2 -1.8 l1.2 1.8 l-1.2 1.6 z" fill="#f2c04a"/>
<path d="M534.4 50 l3.4 -3.4" stroke="#f2c04a" stroke-width="1.2"/><path d="M537.2 47 l.9 -.9" stroke="#e05050" stroke-width="1.2"/>
<path d="M530.6 61.2 h5 l2 2 l-3.6 4.4 l-3.4 -3.6 z" stroke="#f0f0f0" stroke-width="1"/><path d="M534.6 63 l3.2 -3.2" stroke="#f2c04a" stroke-width="1.2"/><path d="M537.4 60.2 l.8 -.8" stroke="#e05050" stroke-width="1.2"/>
<rect x="601.4" y="33.2" width="10.4" height="14.4" rx=".8" fill="#e6e6e6"/><rect x="602.8" y="34.6" width="7.6" height="5.2" fill="#5aaaf0"/><path d="M603 42.4 h3 M603 44.4 h3 M607.4 42.4 h2.6" stroke="#666" stroke-width=".7"/>
<path d="M609.6 43.6 l4 4" stroke="#f2c04a" stroke-width="2"/><path d="M613 42.6 l3.2 2.6 l-1.6 1.6 l-2.8 -2.8 z" fill="#f4f4f4"/>
<path d="M630.6 37.4 L630.60 32.80 A4.6 4.6 0 0 1 634.58 35.10 Z" fill="#e8503a"/>
<path d="M630.6 37.4 L634.58 35.10 A4.6 4.6 0 0 1 634.58 39.70 Z" fill="#f0a030"/>
<path d="M630.6 37.4 L634.58 39.70 A4.6 4.6 0 0 1 630.60 42.00 Z" fill="#f0d040"/>
<path d="M630.6 37.4 L630.60 42.00 A4.6 4.6 0 0 1 626.62 39.70 Z" fill="#58b858"/>
<path d="M630.6 37.4 L626.62 39.70 A4.6 4.6 0 0 1 626.62 35.10 Z" fill="#4a90e0"/>
<path d="M630.6 37.4 L626.62 35.10 A4.6 4.6 0 0 1 630.60 32.80 Z" fill="#a060d0"/>
<path d="M626.4 47.2 h9 M626.4 49.6 h9 M626.4 52 h9 M626.4 54.2 h9" stroke="#ededed" stroke-width="1.3" stroke-linecap="butt"/>
<path d="M626.4 60.2 h9 M626.4 66.6 h9" stroke="#a8a8a8" stroke-width=".8" stroke-linecap="butt"/><path d="M626.4 62.4 h9 M626.4 64.4 h9" stroke="#a8a8a8" stroke-width=".8" stroke-dasharray="1.4 1" stroke-linecap="butt"/>
<path d="M729.6 76.6 h2.4 v2.4 M729.2 76.2 l2.6 2.6" stroke="#ddd" stroke-width=".6"/><path d="M894.6 76.6 h2.4 v2.4 M894.2 76.2 l2.6 2.6" stroke="#ddd" stroke-width=".6"/>
<path d="M740 35 h-2.8 v14.4 h2.8 M745.6 35 h2.8 v4 M748.4 45 v4.4 h-2.8" stroke="#f0f0f0" stroke-width="1.1"/><rect x="740.2" y="37.6" width="4.6" height="3" stroke="#5aa0ee" stroke-width=".9"/><circle cx="742.6" cy="45" r="2" stroke="#d8d8d8" stroke-width=".9"/>
<path d="M749.4 33.2 l1 2.8 l2.8 1 l-2.8 1 l-1 2.8 l-1 -2.8 l-2.8 -1 l2.8 -1 z" fill="#f8cc48"/>
<rect x="756.6" y="58" width="12.6" height="10.8" fill="#5676b4" stroke="#7a9ad6" stroke-width=".6"/>
<path d="M761.2 34.6 h-1.2 v7 h1.2 M765 34.6 h1.2 v7 h-1.2" stroke="#d8d8d8" stroke-width=".8"/><circle cx="763" cy="36.6" r="1" stroke="#5aa0ee" stroke-width=".7"/><circle cx="763" cy="39.6" r="1" stroke="#5aa0ee" stroke-width=".7"/><path d="M766 36.6 l2.4 2.4 M768.4 36.6 l-2.4 2.4" stroke="#e04848" stroke-width=".9"/>
<path d="M760.6 47 h-1.2 v7 h1.2 M764.4 47 h1.2 v3" stroke="#d8d8d8" stroke-width=".8"/><circle cx="762.4" cy="50.4" r="1.2" stroke="#5aa0ee" stroke-width=".7"/><path d="M764.4 55 l3.6 -3.6" stroke="#f2c04a" stroke-width="1.3"/>
<path d="M759.6 60 h-1.2 v7 h1.2 M763.4 60 h1.2 v2" stroke="#f0f0f0" stroke-width=".8"/><path d="M763.6 61.6 v5.6 l1.4 -1.2 l1 2 l.9 -.5 l-1 -1.9 h1.8 z" fill="#fff"/>
<path d="M782.6 37 v5 M798 37 v5 M783.4 39.4 h13.8" stroke="#d8d8d8" stroke-width=".8"/><path d="M783 39.4 l1.8 -.9 v1.8 z M797.6 39.4 l-1.8 -.9 v1.8 z" fill="#d8d8d8"/><rect x="782.6" y="42.8" width="15.4" height="3.2" fill="#f0bc48"/><path d="M785 42.8 v1.4 M787.4 42.8 v1.4 M789.8 42.8 v1.4 M792.2 42.8 v1.4 M794.6 42.8 v1.4" stroke="#8a6418" stroke-width=".5"/>
<rect x="813.4" y="36.6" width="5.6" height="4.8" fill="#5aa8ee" stroke="#f0f0f0" stroke-width=".8"/><path d="M811 36 l2.4 4.4 l.6 -1.8 l1.8 -.4 z" fill="#f4f4f4"/><path d="M815.2 33.6 l.6 1.4 l1.4 .4 l-1.4 .5 l-.6 1.4 l-.5 -1.4 l-1.4 -.5 l1.4 -.4 z" fill="#f2c04a"/>
<rect x="811" y="47" width="7" height="7" stroke="#48b858" stroke-width=".8" stroke-dasharray="1.2 .9"/><path d="M813.8 48.6 v5.8 l1.4 -1.2 l1 2 l.9 -.5 l-1 -1.9 h1.8 z" fill="#f4f4f4"/><circle cx="812.8" cy="50" r="1.2" fill="#5aa0ee"/>
<rect x="811.6" y="59.2" width="6" height="8" stroke="#d8d8d8" stroke-width=".9"/><path d="M812.8 61 h3.6" stroke="#d8d8d8" stroke-width=".9"/><path d="M813 63.4 h3.2 M813 65.4 h3.2" stroke="#d8d8d8" stroke-width=".8" stroke-dasharray=".8 .6"/>
<rect x="830.4" y="35.2" width="10.8" height="14" fill="#f0c060"/><rect x="832.2" y="36.6" width="7.2" height="11.6" fill="#5a5a5a"/><path d="M833.4 35.8 q0 -2.2 2.4 -2.2 q2.4 0 2.4 2.2 z" fill="#f4f4f4"/><path d="M834.6 38.4 h6.4 l3 3 v8.8 h-9.4 z" fill="#ececec"/><path d="M841 38.4 v3 h3" stroke="#999" stroke-width=".5"/>
<rect x="853.4" y="34.4" width="5.6" height="6.6" stroke="#d8d8d8" stroke-width=".7"/><path d="M854.4 36.2 h3.4 M854.4 37.8 h3.4 M854.4 39.4 h2" stroke="#d8d8d8" stroke-width=".6"/><path d="M858 38.4 l3.8 3.8 M861.8 38.4 l-3.8 3.8" stroke="#c8c8c8" stroke-width=".9"/>
<path d="M853.8 46.2 h3.4 l1.4 1.4 v5 h-4.8 z" fill="#b4b4b4"/><path d="M856.2 48.4 h3.4 l1.6 1.6 v5.2 h-5 z" fill="#e2e2e2"/>
<path d="M873.8 35.4 h7 v5.4 h10 v7 h-17 z" fill="#f3f3f3"/>
</svg>
<svg width="1024" height="548" viewBox="0 0 1024 548" fill="none" font-family="Liberation Sans, sans-serif">
<rect x="106.4" y="101.4" width="603.8" height="424.8" fill="#7b7b7b"/>
<rect x="108" y="100.8" width="600.3" height="423.4" fill="#ffffff"/>
<rect x="92.3" y="100.7" width="600.3" height="429.2" stroke="#a65654" stroke-width="0.7" fill="none" stroke-dasharray="1.1 1.1"/>
<path d="M113.4 108 V105.6 H684 V524" stroke="#9a9a9a" stroke-width="0.7" fill="none" stroke-dasharray="2.2 1.6"/>
<rect x="113.7" y="111.7" width="568.3" height="407.8" stroke="#7a7afb" stroke-width="1.4" fill="none"/>
<path d="M611.5 111.6 L611.5 519.6" stroke="#7a7afb" stroke-width="1.3"/>
<path d="M611.5 117.0 L682.0 117.0" stroke="#9a9afc" stroke-width="1.1"/>
<g>
<path d="M217.0 138.8 L368.2 138.8" stroke="#a23a66" stroke-width="0.5"/>
<path d="M217.0 140.9 L368.2 140.9" stroke="#a23a66" stroke-width="1.5"/>
<path d="M217.0 143.2 L368.2 143.2" stroke="#a23a66" stroke-width="0.6"/>
<path d="M217.0 153.8 L368.2 153.8" stroke="#a23a66" stroke-width="0.6"/>
<path d="M217.0 156.4 L368.2 156.4" stroke="#a23a66" stroke-width="1.4"/>
<path d="M217.0 158.8 L368.2 158.8" stroke="#a23a66" stroke-width="0.6"/>
<path d="M217.0 160.5 L368.2 160.5" stroke="#a23a66" stroke-width="0.5"/>
<path d="M217.0 171.0 L368.2 171.0" stroke="#a23a66" stroke-width="0.6"/>
<path d="M217.0 172.6 L368.2 172.6" stroke="#a23a66" stroke-width="1.0"/>
<path d="M217.0 174.4 L368.2 174.4" stroke="#a23a66" stroke-width="0.6"/>
<rect x="216.8" y="137" width="16" height="40" fill="#fff"/>
<path d="M224.8 121.4 L224.8 128.0" stroke="#a23a66" stroke-width="0.7"/>
<path d="M221.20000000000002 135 q-1.4 -4.6 3.6 -7 q5 2.4 3.6 7 z" fill="#b2547c" stroke="#a23a66" stroke-width=".6"/>
<path d="M221.20000000000002 135.4 h7.2 l3.4 3.4 h-14 z" stroke="#a23a66" stroke-width="0.6" fill="#e8c0d0"/>
<path d="M217.60000000000002 138.8 h14.4 v4.4 h-14.4 z" stroke="#a23a66" stroke-width="0.7" fill="none"/>
<path d="M217.6 141.0 L232.0 141.0" stroke="#a23a66" stroke-width="1.2"/>
<rect x="218.4" y="143.2" width="12.8" height="10.6" stroke="#a23a66" stroke-width="0.7" fill="none"/>
<rect x="220.4" y="145.4" width="8.8" height="6.6" stroke="#a23a66" stroke-width="1.0" fill="none"/>
<rect x="222.2" y="146.8" width="5.2" height="3.8" stroke="#a23a66" stroke-width="0.5" fill="none"/>
<path d="M218.4 153.8 h12.8 l2 2.6 l-1 2.4 l1 1.7 h-16.8 l1 -1.7 l-1 -2.4 z" stroke="#a23a66" stroke-width="0.7" fill="#fff"/>
<path d="M216.4 156.4 L233.2 156.4" stroke="#a23a66" stroke-width="1.2"/>
<rect x="219.0" y="160.5" width="11.6" height="10.5" stroke="#a23a66" stroke-width="0.7" fill="#fff"/>
<path d="M218.20000000000002 171 h13.2 v3.4 h-13.2 z" stroke="#a23a66" stroke-width="0.7" fill="#fff"/>
<path d="M219.0 174.4 L219.0 277.4" stroke="#a23a66" stroke-width="0.7"/>
<path d="M230.6 174.4 L230.6 277.4" stroke="#a23a66" stroke-width="0.7"/>
<path d="M221.2 176.0 L221.2 277.0" stroke="#566c90" stroke-width="0.75"/>
<path d="M222.9 176.0 L222.9 277.0" stroke="#566c90" stroke-width="0.75"/>
<path d="M224.6 176.0 L224.6 277.0" stroke="#566c90" stroke-width="0.75"/>
<path d="M226.3 176.0 L226.3 277.0" stroke="#566c90" stroke-width="0.75"/>
<path d="M228.0 176.0 L228.0 277.0" stroke="#566c90" stroke-width="0.75"/>
<path d="M220.2 176.0 L220.2 277.0" stroke="#a23a66" stroke-width="0.5"/>
<path d="M229.4 176.0 L229.4 277.0" stroke="#a23a66" stroke-width="0.5"/>
<path d="M219.0 277.4 h11.6 q.6 4 4.2 5.6 l.8 2 v7.4 h-21.6 v-7.4 l.8 -2 q3.6 -1.6 4.2 -5.6 z" stroke="#a23a66" stroke-width="0.7" fill="#f6e6ee"/>
<path d="M213.60000000000002 291 q2.2 -7 4.4 0" stroke="#a23a66" stroke-width="0.6" fill="#d89ab4"/>
<path d="M218.10000000000002 291 q2.2 -7 4.4 0" stroke="#a23a66" stroke-width="0.6" fill="#d89ab4"/>
<path d="M222.60000000000002 291 q2.2 -7 4.4 0" stroke="#a23a66" stroke-width="0.6" fill="#d89ab4"/>
<path d="M227.10000000000002 291 q2.2 -7 4.4 0" stroke="#a23a66" stroke-width="0.6" fill="#d89ab4"/>
<path d="M231.60000000000002 291 q2.2 -7 4.4 0" stroke="#a23a66" stroke-width="0.6" fill="#d89ab4"/>
<path d="M214.0 285.0 L235.6 285.0" stroke="#a23a66" stroke-width="0.6"/>
<path d="M214.0 291.6 L235.6 291.6" stroke="#a23a66" stroke-width="0.9"/>
<rect x="214.2" y="292.2" width="21.2" height="6.4" stroke="#a23a66" stroke-width="0.7" fill="#fff"/>
<rect x="331.3" y="137" width="16" height="40" fill="#fff"/>
<path d="M339.3 121.4 L339.3 128.0" stroke="#a23a66" stroke-width="0.7"/>
<path d="M335.7 135 q-1.4 -4.6 3.6 -7 q5 2.4 3.6 7 z" fill="#b2547c" stroke="#a23a66" stroke-width=".6"/>
<path d="M335.7 135.4 h7.2 l3.4 3.4 h-14 z" stroke="#a23a66" stroke-width="0.6" fill="#e8c0d0"/>
<path d="M332.1 138.8 h14.4 v4.4 h-14.4 z" stroke="#a23a66" stroke-width="0.7" fill="none"/>
<path d="M332.1 141.0 L346.5 141.0" stroke="#a23a66" stroke-width="1.2"/>
<rect x="332.9" y="143.2" width="12.8" height="10.6" stroke="#a23a66" stroke-width="0.7" fill="none"/>
<rect x="334.9" y="145.4" width="8.8" height="6.6" stroke="#a23a66" stroke-width="1.0" fill="none"/>
<rect x="336.7" y="146.8" width="5.2" height="3.8" stroke="#a23a66" stroke-width="0.5" fill="none"/>
<path d="M332.90000000000003 153.8 h12.8 l2 2.6 l-1 2.4 l1 1.7 h-16.8 l1 -1.7 l-1 -2.4 z" stroke="#a23a66" stroke-width="0.7" fill="#fff"/>
<path d="M330.9 156.4 L347.7 156.4" stroke="#a23a66" stroke-width="1.2"/>
<rect x="333.5" y="160.5" width="11.6" height="10.5" stroke="#a23a66" stroke-width="0.7" fill="#fff"/>
<path d="M332.7 171 h13.2 v3.4 h-13.2 z" stroke="#a23a66" stroke-width="0.7" fill="#fff"/>
<path d="M333.5 174.4 L333.5 277.4" stroke="#a23a66" stroke-width="0.7"/>
<path d="M345.1 174.4 L345.1 277.4" stroke="#a23a66" stroke-width="0.7"/>
<path d="M335.7 176.0 L335.7 277.0" stroke="#566c90" stroke-width="0.75"/>
<path d="M337.4 176.0 L337.4 277.0" stroke="#566c90" stroke-width="0.75"/>
<path d="M339.1 176.0 L339.1 277.0" stroke="#566c90" stroke-width="0.75"/>
<path d="M340.8 176.0 L340.8 277.0" stroke="#566c90" stroke-width="0.75"/>
<path d="M342.5 176.0 L342.5 277.0" stroke="#566c90" stroke-width="0.75"/>
<path d="M334.7 176.0 L334.7 277.0" stroke="#a23a66" stroke-width="0.5"/>
<path d="M343.9 176.0 L343.9 277.0" stroke="#a23a66" stroke-width="0.5"/>
<path d="M333.5 277.4 h11.6 q.6 4 4.2 5.6 l.8 2 v7.4 h-21.6 v-7.4 l.8 -2 q3.6 -1.6 4.2 -5.6 z" stroke="#a23a66" stroke-width="0.7" fill="#f6e6ee"/>
<path d="M328.1 291 q2.2 -7 4.4 0" stroke="#a23a66" stroke-width="0.6" fill="#d89ab4"/>
<path d="M332.6 291 q2.2 -7 4.4 0" stroke="#a23a66" stroke-width="0.6" fill="#d89ab4"/>
<path d="M337.1 291 q2.2 -7 4.4 0" stroke="#a23a66" stroke-width="0.6" fill="#d89ab4"/>
<path d="M341.6 291 q2.2 -7 4.4 0" stroke="#a23a66" stroke-width="0.6" fill="#d89ab4"/>
<path d="M346.1 291 q2.2 -7 4.4 0" stroke="#a23a66" stroke-width="0.6" fill="#d89ab4"/>
<path d="M328.5 285.0 L350.1 285.0" stroke="#a23a66" stroke-width="0.6"/>
<path d="M328.5 291.6 L350.1 291.6" stroke="#a23a66" stroke-width="0.9"/>
<rect x="328.7" y="292.2" width="21.2" height="6.4" stroke="#a23a66" stroke-width="0.7" fill="#fff"/>
<clipPath id="cpE"><rect x="150" y="100" width="218.4" height="260"/></clipPath><g clip-path="url(#cpE)">
<path d="M235.8 204.7 V180.3 H276.8 V204.7 Q256.3 190.9 235.8 204.7 Z" stroke="#a23a66" stroke-width="0.8" fill="none"/>
<path d="M239.0 200.4 V183.3 H273.6 V200.4 Q256.3 190.6 239.0 200.4 Z" stroke="#a23a66" stroke-width="0.8" fill="none"/>
<path d="M235.8 298.4 V215 Q235.8 210.4 240.8 208.6 Q256.3 199.8 271.8 208.6 Q276.8 210.4 276.8 215 V298.4" stroke="#a23a66" stroke-width="0.8" fill="none"/>
<path d="M239.10000000000002 298.4 V217 Q239.10000000000002 213 243.20000000000002 211.2 Q256.3 202.8 269.40000000000003 211.2 Q273.5 213 273.5 217 V298.4" stroke="#a23a66" stroke-width="0.8" fill="none"/>
<rect x="239.3" y="270.4" width="34.0" height="28.4" fill="#6c84a6" stroke="#a040c8" stroke-width=".8"/>
<path d="M240.4 271.4 L240.4 284.6" stroke="#d2dae8" stroke-width="0.8"/>
<path d="M242.5 271.4 L242.5 284.6" stroke="#d2dae8" stroke-width="0.8"/>
<path d="M244.6 271.4 L244.6 284.6" stroke="#d2dae8" stroke-width="0.8"/>
<path d="M246.7 271.4 L246.7 284.6" stroke="#d2dae8" stroke-width="0.8"/>
<path d="M248.8 271.4 L248.8 284.6" stroke="#d2dae8" stroke-width="0.8"/>
<path d="M250.9 271.4 L250.9 284.6" stroke="#d2dae8" stroke-width="0.8"/>
<path d="M253.0 271.4 L253.0 284.6" stroke="#d2dae8" stroke-width="0.8"/>
<path d="M255.1 271.4 L255.1 284.6" stroke="#d2dae8" stroke-width="0.8"/>
<path d="M257.2 271.4 L257.2 284.6" stroke="#d2dae8" stroke-width="0.8"/>
<path d="M259.3 271.4 L259.3 284.6" stroke="#d2dae8" stroke-width="0.8"/>
<path d="M261.4 271.4 L261.4 284.6" stroke="#d2dae8" stroke-width="0.8"/>
<path d="M263.5 271.4 L263.5 284.6" stroke="#d2dae8" stroke-width="0.8"/>
<path d="M265.6 271.4 L265.6 284.6" stroke="#d2dae8" stroke-width="0.8"/>
<path d="M267.7 271.4 L267.7 284.6" stroke="#d2dae8" stroke-width="0.8"/>
<path d="M269.8 271.4 L269.8 284.6" stroke="#d2dae8" stroke-width="0.8"/>
<path d="M271.9 271.4 L271.9 284.6" stroke="#d2dae8" stroke-width="0.8"/>
<path d="M240.35000000000002 298.4 q0 -9 3.2 -13 q3.2 4 3.2 13" stroke="#8a9ebc" stroke-width="0.5" fill="#607a9e"/>
<circle cx="243.6" cy="283.4" r="0.9" stroke="#e6ecf4" stroke-width="0.4" fill="#e6ecf4"/>
<path d="M248.85000000000002 298.4 q0 -9 3.2 -13 q3.2 4 3.2 13" stroke="#8a9ebc" stroke-width="0.5" fill="#607a9e"/>
<circle cx="252.1" cy="283.4" r="0.9" stroke="#e6ecf4" stroke-width="0.4" fill="#e6ecf4"/>
<path d="M257.35 298.4 q0 -9 3.2 -13 q3.2 4 3.2 13" stroke="#8a9ebc" stroke-width="0.5" fill="#607a9e"/>
<circle cx="260.6" cy="283.4" r="0.9" stroke="#e6ecf4" stroke-width="0.4" fill="#e6ecf4"/>
<path d="M265.85 298.4 q0 -9 3.2 -13 q3.2 4 3.2 13" stroke="#8a9ebc" stroke-width="0.5" fill="#607a9e"/>
<circle cx="269.1" cy="283.4" r="0.9" stroke="#e6ecf4" stroke-width="0.4" fill="#e6ecf4"/>
<path d="M256.3 270.4 L256.3 298.8" stroke="#4a5e7c" stroke-width="0.5"/>
<path d="M287.2 204.7 V180.3 H328.2 V204.7 Q307.7 190.9 287.2 204.7 Z" stroke="#a23a66" stroke-width="0.8" fill="none"/>
<path d="M290.4 200.4 V183.3 H325.0 V200.4 Q307.7 190.6 290.4 200.4 Z" stroke="#a23a66" stroke-width="0.8" fill="none"/>
<path d="M287.2 298.4 V215 Q287.2 210.4 292.2 208.6 Q307.7 199.8 323.2 208.6 Q328.2 210.4 328.2 215 V298.4" stroke="#a23a66" stroke-width="0.8" fill="none"/>
<path d="M290.5 298.4 V217 Q290.5 213 294.59999999999997 211.2 Q307.7 202.8 320.8 211.2 Q324.9 213 324.9 217 V298.4" stroke="#a23a66" stroke-width="0.8" fill="none"/>
<rect x="290.7" y="270.4" width="34.0" height="28.4" fill="#6c84a6" stroke="#a040c8" stroke-width=".8"/>
<path d="M291.8 271.4 L291.8 284.6" stroke="#d2dae8" stroke-width="0.8"/>
<path d="M293.9 271.4 L293.9 284.6" stroke="#d2dae8" stroke-width="0.8"/>
<path d="M296.0 271.4 L296.0 284.6" stroke="#d2dae8" stroke-width="0.8"/>
<path d="M298.1 271.4 L298.1 284.6" stroke="#d2dae8" stroke-width="0.8"/>
<path d="M300.2 271.4 L300.2 284.6" stroke="#d2dae8" stroke-width="0.8"/>
<path d="M302.3 271.4 L302.3 284.6" stroke="#d2dae8" stroke-width="0.8"/>
<path d="M304.4 271.4 L304.4 284.6" stroke="#d2dae8" stroke-width="0.8"/>
<path d="M306.5 271.4 L306.5 284.6" stroke="#d2dae8" stroke-width="0.8"/>
<path d="M308.6 271.4 L308.6 284.6" stroke="#d2dae8" stroke-width="0.8"/>
<path d="M310.7 271.4 L310.7 284.6" stroke="#d2dae8" stroke-width="0.8"/>
<path d="M312.8 271.4 L312.8 284.6" stroke="#d2dae8" stroke-width="0.8"/>
<path d="M314.9 271.4 L314.9 284.6" stroke="#d2dae8" stroke-width="0.8"/>
<path d="M317.0 271.4 L317.0 284.6" stroke="#d2dae8" stroke-width="0.8"/>
<path d="M319.1 271.4 L319.1 284.6" stroke="#d2dae8" stroke-width="0.8"/>
<path d="M321.2 271.4 L321.2 284.6" stroke="#d2dae8" stroke-width="0.8"/>
<path d="M323.3 271.4 L323.3 284.6" stroke="#d2dae8" stroke-width="0.8"/>
<path d="M291.75 298.4 q0 -9 3.2 -13 q3.2 4 3.2 13" stroke="#8a9ebc" stroke-width="0.5" fill="#607a9e"/>
<circle cx="294.9" cy="283.4" r="0.9" stroke="#e6ecf4" stroke-width="0.4" fill="#e6ecf4"/>
<path d="M300.25 298.4 q0 -9 3.2 -13 q3.2 4 3.2 13" stroke="#8a9ebc" stroke-width="0.5" fill="#607a9e"/>
<circle cx="303.4" cy="283.4" r="0.9" stroke="#e6ecf4" stroke-width="0.4" fill="#e6ecf4"/>
<path d="M308.75 298.4 q0 -9 3.2 -13 q3.2 4 3.2 13" stroke="#8a9ebc" stroke-width="0.5" fill="#607a9e"/>
<circle cx="311.9" cy="283.4" r="0.9" stroke="#e6ecf4" stroke-width="0.4" fill="#e6ecf4"/>
<path d="M317.25 298.4 q0 -9 3.2 -13 q3.2 4 3.2 13" stroke="#8a9ebc" stroke-width="0.5" fill="#607a9e"/>
<circle cx="320.4" cy="283.4" r="0.9" stroke="#e6ecf4" stroke-width="0.4" fill="#e6ecf4"/>
<path d="M307.7 270.4 L307.7 298.8" stroke="#4a5e7c" stroke-width="0.5"/>
<path d="M350 204.7 V180.3 H391 V204.7 Q370.5 190.9 350 204.7 Z" stroke="#a23a66" stroke-width="0.8" fill="none"/>
<path d="M353.2 200.4 V183.3 H387.8 V200.4 Q370.5 190.6 353.2 200.4 Z" stroke="#a23a66" stroke-width="0.8" fill="none"/>
<path d="M350 298.4 V215 Q350 210.4 355 208.6 Q370.5 199.8 386 208.6 Q391 210.4 391 215 V298.4" stroke="#a23a66" stroke-width="0.8" fill="none"/>
<path d="M353.3 298.4 V217 Q353.3 213 357.4 211.2 Q370.5 202.8 383.6 211.2 Q387.7 213 387.7 217 V298.4" stroke="#a23a66" stroke-width="0.8" fill="none"/>
<rect x="353.5" y="270.4" width="34" height="28.4" fill="#6c84a6" stroke="#a040c8" stroke-width=".8"/>
<path d="M354.6 271.4 L354.6 284.6" stroke="#d2dae8" stroke-width="0.8"/>
<path d="M356.7 271.4 L356.7 284.6" stroke="#d2dae8" stroke-width="0.8"/>
<path d="M358.8 271.4 L358.8 284.6" stroke="#d2dae8" stroke-width="0.8"/>
<path d="M360.9 271.4 L360.9 284.6" stroke="#d2dae8" stroke-width="0.8"/>
<path d="M363.0 271.4 L363.0 284.6" stroke="#d2dae8" stroke-width="0.8"/>
<path d="M365.1 271.4 L365.1 284.6" stroke="#d2dae8" stroke-width="0.8"/>
<path d="M367.2 271.4 L367.2 284.6" stroke="#d2dae8" stroke-width="0.8"/>
<path d="M369.3 271.4 L369.3 284.6" stroke="#d2dae8" stroke-width="0.8"/>
<path d="M371.4 271.4 L371.4 284.6" stroke="#d2dae8" stroke-width="0.8"/>
<path d="M373.5 271.4 L373.5 284.6" stroke="#d2dae8" stroke-width="0.8"/>
<path d="M375.6 271.4 L375.6 284.6" stroke="#d2dae8" stroke-width="0.8"/>
<path d="M377.7 271.4 L377.7 284.6" stroke="#d2dae8" stroke-width="0.8"/>
<path d="M379.8 271.4 L379.8 284.6" stroke="#d2dae8" stroke-width="0.8"/>
<path d="M381.9 271.4 L381.9 284.6" stroke="#d2dae8" stroke-width="0.8"/>
<path d="M384.0 271.4 L384.0 284.6" stroke="#d2dae8" stroke-width="0.8"/>
<path d="M386.1 271.4 L386.1 284.6" stroke="#d2dae8" stroke-width="0.8"/>
<path d="M354.55 298.4 q0 -9 3.2 -13 q3.2 4 3.2 13" stroke="#8a9ebc" stroke-width="0.5" fill="#607a9e"/>
<circle cx="357.8" cy="283.4" r="0.9" stroke="#e6ecf4" stroke-width="0.4" fill="#e6ecf4"/>
<path d="M363.05 298.4 q0 -9 3.2 -13 q3.2 4 3.2 13" stroke="#8a9ebc" stroke-width="0.5" fill="#607a9e"/>
<circle cx="366.2" cy="283.4" r="0.9" stroke="#e6ecf4" stroke-width="0.4" fill="#e6ecf4"/>
<path d="M371.55 298.4 q0 -9 3.2 -13 q3.2 4 3.2 13" stroke="#8a9ebc" stroke-width="0.5" fill="#607a9e"/>
<circle cx="374.8" cy="283.4" r="0.9" stroke="#e6ecf4" stroke-width="0.4" fill="#e6ecf4"/>
<path d="M380.05 298.4 q0 -9 3.2 -13 q3.2 4 3.2 13" stroke="#8a9ebc" stroke-width="0.5" fill="#607a9e"/>
<circle cx="383.2" cy="283.4" r="0.9" stroke="#e6ecf4" stroke-width="0.4" fill="#e6ecf4"/>
<path d="M370.5 270.4 L370.5 298.8" stroke="#4a5e7c" stroke-width="0.5"/>
</g>
<path d="M217.0 267.8 L368.2 267.8" stroke="#a23a66" stroke-width="0.8"/>
<path d="M217.0 266.6 L368.2 266.6" stroke="#a23a66" stroke-width="0.4"/>
<path d="M214.0 298.6 L368.2 298.6" stroke="#a23a66" stroke-width="1.1"/>
<path d="M209.0 300.2 L368.2 300.2" stroke="#a23a66" stroke-width="0.5"/>
<path d="M209.0 305.2 L300.0 305.2" stroke="#3a3ad8" stroke-width="0.7"/>
<path d="M300.0 305.2 L368.2 303.2" stroke="#3a3ad8" stroke-width="0.7"/>
<path d="M209.0 303.8 L368.2 303.8" stroke="#555" stroke-width="0.4"/>
<text x="182.0" y="138.9" fill="#00dff0" font-size="2.7" text-anchor="start" textLength="26" lengthAdjust="spacingAndGlyphs" font-weight="bold">TOP OF PARAPET LVL</text>
<path d="M181.0 139.7 L209.5 139.7" stroke="#ff2a2a" stroke-width="0.7"/>
<text x="182.0" y="196.3" fill="#00dff0" font-size="2.7" text-anchor="start" textLength="26" lengthAdjust="spacingAndGlyphs" font-weight="bold">FIRST FLOOR LVL +4500</text>
<path d="M181.0 197.1 L209.5 197.1" stroke="#ff2a2a" stroke-width="0.7"/>
<text x="182.0" y="267.5" fill="#00dff0" font-size="2.7" text-anchor="start" textLength="26" lengthAdjust="spacingAndGlyphs" font-weight="bold">GROUND FLOOR LVL +450</text>
<path d="M181.0 268.3 L209.5 268.3" stroke="#ff2a2a" stroke-width="0.7"/>
<text x="182.0" y="298.7" fill="#00dff0" font-size="2.7" text-anchor="start" textLength="26" lengthAdjust="spacingAndGlyphs" font-weight="bold">PLINTH LVL +450</text>
<path d="M181.0 299.5 L209.5 299.5" stroke="#ff2a2a" stroke-width="0.7"/>
<text x="182.0" y="305.3" fill="#00dff0" font-size="2.7" text-anchor="start" textLength="26" lengthAdjust="spacingAndGlyphs" font-weight="bold">GROUND LVL +0.00</text>
<path d="M181.0 306.1 L209.5 306.1" stroke="#ff2a2a" stroke-width="0.7"/>
<path d="M209.0 196.4 L368.2 196.4" stroke="#555" stroke-width="0.5"/>
<path d="M209.0 139.0 L217.0 139.0" stroke="#555" stroke-width="0.4"/>
<path d="M196.2 139.0 L196.2 306.0" stroke="#555" stroke-width="0.6"/>
<path d="M195.0 140.0 L197.4 138.0" stroke="#555" stroke-width="0.6"/>
<path d="M195.0 197.4 L197.4 195.4" stroke="#555" stroke-width="0.6"/>
<path d="M195.0 268.8 L197.4 266.8" stroke="#555" stroke-width="0.6"/>
<path d="M195.0 299.8 L197.4 297.8" stroke="#555" stroke-width="0.6"/>
<path d="M195.0 306.4 L197.4 304.4" stroke="#555" stroke-width="0.6"/>
<text x="195.4" y="167.0" fill="#00dff0" font-size="3.1" text-anchor="middle" transform="rotate(-90 195.4 167)" font-weight="bold">1500</text>
<text x="195.4" y="232.0" fill="#00dff0" font-size="3.1" text-anchor="middle" transform="rotate(-90 195.4 232)" font-weight="bold">3000</text>
<text x="195.4" y="283.0" fill="#00dff0" font-size="3.1" text-anchor="middle" transform="rotate(-90 195.4 283)" font-weight="bold">750</text>
<circle cx="305.3" cy="118.8" r="3.4" stroke="#ff2a2a" stroke-width="0.9" fill="none"/>
<text x="305.3" y="119.8" fill="#b03030" font-size="3" text-anchor="middle"  font-weight="bold">A</text>
<path d="M305.3 122.2 L305.3 128.0" stroke="#ff2a2a" stroke-width="0.7"/>
<path d="M305.3 128.0 L305.3 316.0" stroke="#3a8cf0" stroke-width="0.8" stroke-dasharray="3.2 1 .8 1"/>
<path d="M299.6 314 v2.4 h5.7" stroke="#ff2a2a" stroke-width="0.7" fill="none"/>
<circle cx="204.2" cy="190.4" r="3.4" stroke="#ff2a2a" stroke-width="0.9" fill="none"/>
<text x="204.2" y="191.4" fill="#b03030" font-size="3" text-anchor="middle"  font-weight="bold">B</text>
<path d="M207.6 190.4 L216.0 190.4" stroke="#ff2a2a" stroke-width="0.7"/>
<path d="M216.0 190.4 L368.0 190.4" stroke="#3a8cf0" stroke-width="0.8" stroke-dasharray="3.2 1 .8 1"/>
<path d="M368.0 190.4 L374.4 190.4" stroke="#ff2a2a" stroke-width="0.7"/>
<path d="M374.4 190.4 L374.4 194.0" stroke="#444" stroke-width="0.6"/>
<circle cx="204.2" cy="277.4" r="3.4" stroke="#ff2a2a" stroke-width="0.9" fill="none"/>
<text x="204.2" y="278.4" fill="#b03030" font-size="3" text-anchor="middle"  font-weight="bold">1</text>
<path d="M207.6 277.4 L216.0 277.4" stroke="#ff2a2a" stroke-width="0.7"/>
<path d="M216.0 277.4 L368.0 277.4" stroke="#3a8cf0" stroke-width="0.8" stroke-dasharray="3.2 1 .8 1"/>
<path d="M368.0 277.4 L374.4 277.4" stroke="#ff2a2a" stroke-width="0.7"/>
<path d="M374.4 277.4 L374.4 281.0" stroke="#444" stroke-width="0.6"/>
<path d="M259.2 138.6 L259.2 222.0" stroke="#555" stroke-width="0.5"/>
<text x="258.6" y="141.0" fill="#00dff0" font-size="2.9" text-anchor="middle" transform="rotate(-90 258.6 141)" font-weight="bold">150</text>
<text x="258.6" y="149.0" fill="#00dff0" font-size="2.9" text-anchor="middle" transform="rotate(-90 258.6 149)" font-weight="bold">150</text>
<text x="258.6" y="157.0" fill="#00dff0" font-size="2.9" text-anchor="middle" transform="rotate(-90 258.6 157)" font-weight="bold">150</text>
<text x="258.6" y="165.5" fill="#00dff0" font-size="2.9" text-anchor="middle" transform="rotate(-90 258.6 165.5)" font-weight="bold">150</text>
<text x="258.6" y="176.5" fill="#00dff0" font-size="2.9" text-anchor="middle" transform="rotate(-90 258.6 176.5)" font-weight="bold">150</text>
<text x="258.6" y="181.5" fill="#00dff0" font-size="2.9" text-anchor="middle" transform="rotate(-90 258.6 181.5)" font-weight="bold">150</text>
<text x="258.6" y="189.0" fill="#00dff0" font-size="2.9" text-anchor="middle" transform="rotate(-90 258.6 189)" font-weight="bold">150</text>
<text x="258.6" y="199.5" fill="#00dff0" font-size="2.9" text-anchor="middle" transform="rotate(-90 258.6 199.5)" font-weight="bold">150</text>
<text x="258.6" y="204.0" fill="#00dff0" font-size="2.9" text-anchor="middle" transform="rotate(-90 258.6 204)" font-weight="bold">150</text>
<text x="258.6" y="208.5" fill="#00dff0" font-size="2.9" text-anchor="middle" transform="rotate(-90 258.6 208.5)" font-weight="bold">150</text>
<path d="M252.0 172.5 L259.2 172.5" stroke="#555" stroke-width="0.4"/>
<path d="M252.0 182.0 L259.2 182.0" stroke="#555" stroke-width="0.4"/>
<path d="M252.0 198.5 L259.2 198.5" stroke="#555" stroke-width="0.4"/>
<path d="M252.0 206.5 L259.2 206.5" stroke="#555" stroke-width="0.4"/>
<path d="M279.0 180.4 L279.0 206.0" stroke="#555" stroke-width="0.5"/>
<path d="M276.0 180.4 L280.0 180.4" stroke="#555" stroke-width="0.4"/>
<path d="M276.0 206.0 L280.0 206.0" stroke="#555" stroke-width="0.4"/>
<text x="278.4" y="194.0" fill="#00dff0" font-size="2.4" text-anchor="middle" transform="rotate(-90 278.4 194)" font-weight="bold">600</text>
<path d="M349.6 144.0 L349.6 152.4" stroke="#555" stroke-width="0.5"/>
<path d="M346.0 144.0 L350.6 144.0" stroke="#555" stroke-width="0.4"/>
<path d="M346.0 152.4 L350.6 152.4" stroke="#555" stroke-width="0.4"/>
<text x="348.0" y="149.4" fill="#00dff0" font-size="2.4" text-anchor="middle" transform="rotate(-90 348 149.4)" font-weight="bold">300</text>
<path d="M219.0 235.0 L368.2 235.0" stroke="#555" stroke-width="0.5"/>
<path d="M219.0 233.6 L219.0 236.4" stroke="#555" stroke-width="0.5"/>
<path d="M230.6 233.6 L230.6 236.4" stroke="#555" stroke-width="0.5"/>
<path d="M235.8 233.6 L235.8 236.4" stroke="#555" stroke-width="0.5"/>
<path d="M239.2 233.6 L239.2 236.4" stroke="#555" stroke-width="0.5"/>
<path d="M273.4 233.6 L273.4 236.4" stroke="#555" stroke-width="0.5"/>
<path d="M276.8 233.6 L276.8 236.4" stroke="#555" stroke-width="0.5"/>
<path d="M287.2 233.6 L287.2 236.4" stroke="#555" stroke-width="0.5"/>
<path d="M290.6 233.6 L290.6 236.4" stroke="#555" stroke-width="0.5"/>
<path d="M324.8 233.6 L324.8 236.4" stroke="#555" stroke-width="0.5"/>
<path d="M328.2 233.6 L328.2 236.4" stroke="#555" stroke-width="0.5"/>
<path d="M333.5 233.6 L333.5 236.4" stroke="#555" stroke-width="0.5"/>
<path d="M345.1 233.6 L345.1 236.4" stroke="#555" stroke-width="0.5"/>
<path d="M350.0 233.6 L350.0 236.4" stroke="#555" stroke-width="0.5"/>
<path d="M353.4 233.6 L353.4 236.4" stroke="#555" stroke-width="0.5"/>
<text x="224.8" y="234.0" fill="#00dff0" font-size="3" text-anchor="middle"  font-weight="bold">450</text>
<text x="234.0" y="234.0" fill="#00dff0" font-size="3" text-anchor="middle"  font-weight="bold">150</text>
<text x="256.0" y="234.0" fill="#00dff0" font-size="3" text-anchor="middle"  font-weight="bold">1350</text>
<text x="282.0" y="234.0" fill="#00dff0" font-size="3" text-anchor="middle"  font-weight="bold">450</text>
<text x="307.6" y="234.0" fill="#00dff0" font-size="3" text-anchor="middle"  font-weight="bold">1350</text>
<text x="331.0" y="234.0" fill="#00dff0" font-size="3" text-anchor="middle"  font-weight="bold">150</text>
<text x="339.3" y="234.0" fill="#00dff0" font-size="3" text-anchor="middle"  font-weight="bold">450</text>
<text x="351.6" y="234.0" fill="#00dff0" font-size="3" text-anchor="middle"  font-weight="bold">150</text>
<path d="M214.4 311.0 L350.4 311.0" stroke="#555" stroke-width="0.5"/>
<path d="M214.4 306.0 L214.4 312.4" stroke="#555" stroke-width="0.45"/>
<path d="M224.8 306.0 L224.8 312.4" stroke="#555" stroke-width="0.45"/>
<path d="M235.6 306.0 L235.6 312.4" stroke="#555" stroke-width="0.45"/>
<path d="M328.2 306.0 L328.2 312.4" stroke="#555" stroke-width="0.45"/>
<path d="M339.3 306.0 L339.3 312.4" stroke="#555" stroke-width="0.45"/>
<path d="M350.4 306.0 L350.4 312.4" stroke="#555" stroke-width="0.45"/>
<text x="225.0" y="310.2" fill="#00dff0" font-size="3" text-anchor="middle"  font-weight="bold">900</text>
<text x="282.0" y="310.2" fill="#00dff0" font-size="3" text-anchor="middle"  font-weight="bold">5100</text>
<text x="339.6" y="310.2" fill="#00dff0" font-size="3" text-anchor="middle"  font-weight="bold">900</text>
<path d="M224.8 321.2 L339.3 321.2" stroke="#555" stroke-width="0.5"/>
<text x="282.0" y="320.4" fill="#00dff0" font-size="3" text-anchor="middle"  font-weight="bold">6000</text>
<path d="M224.8 299.0 L224.8 324.4" stroke="#555" stroke-width="0.5"/>
<path d="M339.3 299.0 L339.3 324.4" stroke="#555" stroke-width="0.5"/>
<circle cx="224.8" cy="327.7" r="3.3" stroke="#ff2a2a" stroke-width="0.9" fill="none"/>
<circle cx="339.3" cy="327.7" r="3.3" stroke="#ff2a2a" stroke-width="0.9" fill="none"/>
<text x="224.8" y="328.8" fill="#b03030" font-size="3" text-anchor="middle"  font-weight="bold">1</text>
<text x="339.3" y="328.8" fill="#b03030" font-size="3" text-anchor="middle"  font-weight="bold">2</text>
<rect x="190.0" y="128.8" width="9.0" height="3.8" stroke="#ff2a2a" stroke-width="0.8" fill="none"/>
<text x="194.5" y="131.6" fill="#00dff0" font-size="3" text-anchor="middle"  font-weight="bold">P01</text>
<path d="M199.0 130.7 L222.0 130.7" stroke="#555" stroke-width="0.5"/>
<path d="M201.6 130.7 L216.6 153.4" stroke="#555" stroke-width="0.5"/>
<path d="M210.8 130.7 L218.4 142.6" stroke="#555" stroke-width="0.5"/>
<path d="M216.6 153.4 L222.8 166.6" stroke="#555" stroke-width="0.4"/>
<rect x="199.2" y="258.8" width="9.0" height="3.8" stroke="#ff2a2a" stroke-width="0.8" fill="none"/>
<text x="203.7" y="261.6" fill="#00dff0" font-size="3" text-anchor="middle"  font-weight="bold">S02</text>
<path d="M208.4 260.6 L214.0 260.6" stroke="#555" stroke-width="0.5"/>
<path d="M214.0 260.6 L219.4 276.0" stroke="#555" stroke-width="0.5"/>
<rect x="199.2" y="289.2" width="9.0" height="3.8" stroke="#ff2a2a" stroke-width="0.8" fill="none"/>
<text x="203.7" y="292.0" fill="#00dff0" font-size="3" text-anchor="middle"  font-weight="bold">S01</text>
<path d="M208.4 291.0 L213.0 291.0" stroke="#555" stroke-width="0.5"/>
<path d="M213.0 291.0 L216.6 300.6" stroke="#555" stroke-width="0.5"/>
<rect x="202.4" y="316.0" width="9.0" height="3.8" stroke="#ff2a2a" stroke-width="0.8" fill="none"/>
<text x="206.9" y="318.8" fill="#00dff0" font-size="3" text-anchor="middle"  font-weight="bold">G01</text>
<path d="M211.6 318.0 L216.0 318.0" stroke="#555" stroke-width="0.5"/>
<path d="M216.0 318.0 L222.0 306.0" stroke="#555" stroke-width="0.5"/>
<rect x="248.8" y="247.0" width="9.0" height="3.8" stroke="#ff2a2a" stroke-width="0.8" fill="none"/>
<text x="253.3" y="249.8" fill="#00dff0" font-size="3" text-anchor="middle"  font-weight="bold">W01</text>
<path d="M258.0 248.8 L270.6 248.8" stroke="#555" stroke-width="0.5"/>
<path d="M270.6 248.8 L276.4 259.0" stroke="#555" stroke-width="0.5"/>
<path d="M268.0 248.8 L276.0 266.0" stroke="#555" stroke-width="0.4"/>
<rect x="242.2" y="258.8" width="9.0" height="3.8" stroke="#ff2a2a" stroke-width="0.8" fill="none"/>
<text x="246.7" y="261.6" fill="#00dff0" font-size="3" text-anchor="middle"  font-weight="bold">W02</text>
<path d="M251.4 260.6 L259.6 260.6" stroke="#555" stroke-width="0.5"/>
<path d="M259.6 260.6 L265.4 272.0" stroke="#555" stroke-width="0.5"/>
<path d="M259.2 222.0 L256.0 248.0" stroke="#555" stroke-width="0.5"/>
<path d="M266.0 203.0 L259.8 222.0" stroke="#555" stroke-width="0.5"/>
<path d="M317.6 203.0 L311.0 235.0" stroke="#555" stroke-width="0.5"/>
<path d="M278 267 h3 v2.6" stroke="#333" stroke-width="0.7" fill="none"/>
<text x="267.4" y="329.2" fill="#1c1c1c" font-size="4.4" text-anchor="start" font-weight="bold" textLength="33.6" lengthAdjust="spacingAndGlyphs">NORTH ELEVATION</text>
<path d="M267.4 330.2 L301.0 330.2" stroke="#222" stroke-width="0.6"/>
<text x="267.9" y="333.2" fill="#00dff0" font-size="2.6" text-anchor="start" textLength="12" lengthAdjust="spacingAndGlyphs" font-weight="bold">SCALE 1:50</text>
<polygon points="307.6,330.2 305.9,333.1 302.5,333.1 300.8,330.2 302.5,327.3 305.9,327.3" stroke="#ff2a2a" stroke-width="0.9" fill="none"/>
<path d="M293.0 329.8 L301.0 329.8" stroke="#ff2a2a" stroke-width="0.6"/>
</g>
<g>
<text x="426.0" y="138.9" fill="#00dff0" font-size="2.7" text-anchor="start" textLength="26" lengthAdjust="spacingAndGlyphs" font-weight="bold">TOP OF PARAPET LVL</text>
<path d="M425.0 139.7 L453.5 139.7" stroke="#ff2a2a" stroke-width="0.7"/>
<text x="426.0" y="195.9" fill="#00dff0" font-size="2.7" text-anchor="start" textLength="26" lengthAdjust="spacingAndGlyphs" font-weight="bold">FIRST FLOOR LVL +4500</text>
<path d="M425.0 196.7 L453.5 196.7" stroke="#ff2a2a" stroke-width="0.7"/>
<text x="426.0" y="267.7" fill="#00dff0" font-size="2.7" text-anchor="start" textLength="26" lengthAdjust="spacingAndGlyphs" font-weight="bold">GROUND FLOOR LVL +450</text>
<path d="M425.0 268.5 L453.5 268.5" stroke="#ff2a2a" stroke-width="0.7"/>
<text x="426.0" y="298.9" fill="#00dff0" font-size="2.7" text-anchor="start" textLength="26" lengthAdjust="spacingAndGlyphs" font-weight="bold">PLINTH LVL +450</text>
<path d="M425.0 299.7 L453.5 299.7" stroke="#ff2a2a" stroke-width="0.7"/>
<text x="426.0" y="305.3" fill="#00dff0" font-size="2.7" text-anchor="start" textLength="26" lengthAdjust="spacingAndGlyphs" font-weight="bold">GROUND LVL +0.00</text>
<path d="M425.0 306.1 L453.5 306.1" stroke="#ff2a2a" stroke-width="0.7"/>
<path d="M453.5 139.0 L463.0 139.0" stroke="#888" stroke-width="0.5" stroke-dasharray=".8 .8"/>
<path d="M453.5 196.2 L470.0 196.2" stroke="#888" stroke-width="0.5" stroke-dasharray=".8 .8"/>
<path d="M439.8 139.0 L439.8 306.0" stroke="#555" stroke-width="0.6"/>
<path d="M438.6 140.0 L441.0 138.0" stroke="#555" stroke-width="0.6"/>
<path d="M438.6 197.2 L441.0 195.2" stroke="#555" stroke-width="0.6"/>
<path d="M438.6 269.0 L441.0 267.0" stroke="#555" stroke-width="0.6"/>
<path d="M438.6 300.2 L441.0 298.2" stroke="#555" stroke-width="0.6"/>
<path d="M438.6 306.6 L441.0 304.6" stroke="#555" stroke-width="0.6"/>
<text x="439.0" y="167.0" fill="#00dff0" font-size="3.1" text-anchor="middle" transform="rotate(-90 439 167)" font-weight="bold">1500</text>
<text x="439.0" y="232.0" fill="#00dff0" font-size="3.1" text-anchor="middle" transform="rotate(-90 439 232)" font-weight="bold">3000</text>
<text x="439.0" y="283.0" fill="#00dff0" font-size="3.1" text-anchor="middle" transform="rotate(-90 439 283)" font-weight="bold">750</text>
<rect x="435" y="305.4" width="64" height="7.8" fill="#62748c"/>
<rect x="463.5" y="300" width="35.5" height="5.6" fill="#6c7e96"/>
<path d="M436.0 312.8 L439.0 305.8" stroke="#a4b2c6" stroke-width="0.4"/>
<path d="M439.0 312.8 L442.0 305.8" stroke="#a4b2c6" stroke-width="0.4"/>
<path d="M442.0 312.8 L445.0 305.8" stroke="#a4b2c6" stroke-width="0.4"/>
<path d="M445.0 312.8 L448.0 305.8" stroke="#a4b2c6" stroke-width="0.4"/>
<path d="M448.0 312.8 L451.0 305.8" stroke="#a4b2c6" stroke-width="0.4"/>
<path d="M451.0 312.8 L454.0 305.8" stroke="#a4b2c6" stroke-width="0.4"/>
<path d="M454.0 312.8 L457.0 305.8" stroke="#a4b2c6" stroke-width="0.4"/>
<path d="M457.0 312.8 L460.0 305.8" stroke="#a4b2c6" stroke-width="0.4"/>
<path d="M460.0 312.8 L463.0 305.8" stroke="#a4b2c6" stroke-width="0.4"/>
<path d="M463.0 312.8 L466.0 305.8" stroke="#a4b2c6" stroke-width="0.4"/>
<path d="M466.0 312.8 L469.0 305.8" stroke="#a4b2c6" stroke-width="0.4"/>
<path d="M469.0 312.8 L472.0 305.8" stroke="#a4b2c6" stroke-width="0.4"/>
<path d="M472.0 312.8 L475.0 305.8" stroke="#a4b2c6" stroke-width="0.4"/>
<path d="M475.0 312.8 L478.0 305.8" stroke="#a4b2c6" stroke-width="0.4"/>
<path d="M478.0 312.8 L481.0 305.8" stroke="#a4b2c6" stroke-width="0.4"/>
<path d="M481.0 312.8 L484.0 305.8" stroke="#a4b2c6" stroke-width="0.4"/>
<path d="M484.0 312.8 L487.0 305.8" stroke="#a4b2c6" stroke-width="0.4"/>
<path d="M487.0 312.8 L490.0 305.8" stroke="#a4b2c6" stroke-width="0.4"/>
<path d="M490.0 312.8 L493.0 305.8" stroke="#a4b2c6" stroke-width="0.4"/>
<path d="M493.0 312.8 L496.0 305.8" stroke="#a4b2c6" stroke-width="0.4"/>
<path d="M496.0 312.8 L499.0 305.8" stroke="#a4b2c6" stroke-width="0.4"/>
<path d="M499.0 312.8 L502.0 305.8" stroke="#a4b2c6" stroke-width="0.4"/>
<rect x="463.5" y="299.4" width="15.8" height="6" fill="#303030"/>
<rect x="478.8" y="298.3" width="20.2" height="1.6" fill="#f2cc30"/>
<rect x="478.8" y="299.8" width="20.2" height="1" fill="#333"/>
<path d="M450.8 304.9 h8.4 v8.8 h-8.4 z" fill="#2c2c2c"/><rect x="453" y="304.9" width="4" height="6.2" fill="#fff"/>
<path d="M470.5 124.8 L470.5 128.6" stroke="#333" stroke-width="0.6"/>
<path d="M467.1 135 q-1.4 -4.6 3.4 -7 q4.8 2.4 3.4 7 z" fill="#ffd6ff" stroke="#ff30ff" stroke-width=".8"/>
<path d="M463.5 138.4 L499.0 138.4" stroke="#ff30ff" stroke-width="0.9"/>
<path d="M475.5 164.0 L499.0 164.0" stroke="#ff30ff" stroke-width="0.8"/>
<path d="M463.5 170.2 L499.0 170.2" stroke="#ff30ff" stroke-width="0.9"/>
<path d="M469.6 138.4 h-5.4 v3 q3 1 3 4 v4 q-3.6 .6 -3.6 4 q0 3 3.2 3.4 q.4 4 3 6 v3.4 h-5.6 v2.4" stroke="#ff30ff" stroke-width="0.8" fill="none"/>
<path d="M464.1 172.0 L464.1 272.0" stroke="#ff30ff" stroke-width="0.85"/>
<path d="M466.3 172.0 L466.3 272.0" stroke="#ff30ff" stroke-width="0.85"/>
<path d="M469.6 135.0 L469.6 297.4" stroke="#ff30ff" stroke-width="1.0"/>
<path d="M474.8 135.0 L474.8 297.4" stroke="#ff30ff" stroke-width="1.0"/>
<rect x="464.1" y="172" width="5.5" height="100" fill="#ffe8ff" opacity=".7"/>
<path d="M470.6 136.0 L470.6 297.0" stroke="#d8661c" stroke-width="0.9"/>
<path d="M471.8 136.0 L471.8 297.0" stroke="#333" stroke-width="0.5"/>
<path d="M470.6 140.0 L470.6 172.0" stroke="#ffe020" stroke-width="1.0" opacity="0.9"/>
<path d="M470.6 259.0 L470.6 268.0" stroke="#ffe020" stroke-width="1.4"/>
<rect x="470.2" y="154.9" width="4.4" height="11.6" fill="#333"/><rect x="470.2" y="174.6" width="4.4" height="9.6" fill="#3a3a3a"/>
<rect x="470.9" y="145" width="3" height="6" fill="#8aa0c0"/>
<rect x="474.8" y="157" width="24.2" height="2.2" fill="#333"/>
<circle cx="476.4" cy="156.6" r="0.5" stroke="#22e022" stroke-width="0.2" fill="#22e022"/>
<circle cx="479.0" cy="156.6" r="0.5" stroke="#22e022" stroke-width="0.2" fill="#22e022"/>
<circle cx="481.6" cy="156.6" r="0.5" stroke="#22e022" stroke-width="0.2" fill="#22e022"/>
<circle cx="484.2" cy="156.6" r="0.5" stroke="#22e022" stroke-width="0.2" fill="#22e022"/>
<circle cx="486.8" cy="156.6" r="0.5" stroke="#22e022" stroke-width="0.2" fill="#22e022"/>
<circle cx="489.4" cy="156.6" r="0.5" stroke="#22e022" stroke-width="0.2" fill="#22e022"/>
<circle cx="492.0" cy="156.6" r="0.5" stroke="#22e022" stroke-width="0.2" fill="#22e022"/>
<circle cx="494.6" cy="156.6" r="0.5" stroke="#22e022" stroke-width="0.2" fill="#22e022"/>
<circle cx="497.2" cy="156.6" r="0.5" stroke="#22e022" stroke-width="0.2" fill="#22e022"/>
<circle cx="470.1" cy="150.0" r="0.6" stroke="#00dff0" stroke-width="0.2" fill="#00dff0"/>
<circle cx="470.1" cy="186.0" r="0.6" stroke="#00dff0" stroke-width="0.2" fill="#00dff0"/>
<circle cx="470.1" cy="205.0" r="0.6" stroke="#00dff0" stroke-width="0.2" fill="#00dff0"/>
<circle cx="470.1" cy="218.0" r="0.6" stroke="#00dff0" stroke-width="0.2" fill="#00dff0"/>
<circle cx="470.1" cy="240.0" r="0.6" stroke="#00dff0" stroke-width="0.2" fill="#00dff0"/>
<rect x="464.5" y="267.2" width="6.6" height="3.2" fill="#333"/>
<path d="M466.7 275.3 h-3 l-1.2 3 h1.2 l-1.8 3.4 h1.6 l-2 3.6 h1.6 l-1.6 3 v2.2 h5.2" stroke="#ff30ff" stroke-width="0.8" fill="#ffe0ff"/>
<rect x="459.5" y="290.6" width="7.2" height="14.3" stroke="#ff30ff" stroke-width="0.7" fill="#fff"/>
<path d="M467.0 272.0 L467.0 298.0" stroke="#ff30ff" stroke-width="0.7"/>
<path d="M454.3 274.2 L454.3 305.4" stroke="#555" stroke-width="0.5"/>
<path d="M453.0 274.2 L470.0 274.2" stroke="#555" stroke-width="0.5"/>
<text x="453.4" y="290.0" fill="#00dff0" font-size="2.4" text-anchor="middle" transform="rotate(-90 453.4 290)" font-weight="bold">750</text>
<text x="447.0" y="275.2" fill="#00dff0" font-size="2.4" text-anchor="start" textLength="5.6" font-weight="bold">TRELLIS</text>
<path d="M455.6 266.6 v2.4 h2.2 M458 266 v3.4" stroke="#333" stroke-width="0.5" fill="none"/>
<text x="485.8" y="147.5" fill="#00dff0" font-size="2.6" text-anchor="start" textLength="12" lengthAdjust="spacingAndGlyphs" font-weight="bold">RCC SLAB</text>
<text x="485.4" y="201.7" fill="#00dff0" font-size="2.6" text-anchor="start" textLength="19" lengthAdjust="spacingAndGlyphs" font-weight="bold">FACE OF COLUMN</text>
<text x="485.4" y="212.3" fill="#00dff0" font-size="2.6" text-anchor="start" textLength="12.4" lengthAdjust="spacingAndGlyphs" font-weight="bold">BRICK WALL</text>
<text x="486.4" y="283.5" fill="#00dff0" font-size="2.6" text-anchor="start" textLength="7" lengthAdjust="spacingAndGlyphs" font-weight="bold">LOUVRE</text>
<path d="M474 154 L480 146.6 H484.6" stroke="#555" stroke-width="0.6" fill="none"/>
<path d="M474.8 200.8 L484.0 200.8" stroke="#555" stroke-width="0.5"/>
<path d="M470.5 211.4 L484.0 211.4" stroke="#555" stroke-width="0.5"/>
<path d="M474.8 282.6 L484.6 282.6" stroke="#555" stroke-width="0.5"/>
<text x="500.0" y="164.0" fill="#00dff0" font-size="2.6" text-anchor="start" textLength="12" lengthAdjust="spacingAndGlyphs" font-weight="bold">INSULATION</text>
<path d="M490 159.4 L494 163.2 H499" stroke="#555" stroke-width="0.6" fill="none"/>
<text x="480.0" y="293.2" fill="#00dff0" font-size="2.6" text-anchor="start" textLength="28.4" lengthAdjust="spacingAndGlyphs" font-weight="bold">RCC FLOOR 100MM THK</text>
<path d="M486.4 294.6 L497.4 294.6" stroke="#ff2a2a" stroke-width="0.7"/>
<path d="M476.6 293.0 L476.6 298.4" stroke="#555" stroke-width="0.4"/>
<circle cx="476.6" cy="296.4" r="0.6" stroke="#00dff0" stroke-width="0.2" fill="#00dff0"/>
<rect x="433.5" y="130.1" width="9.6" height="3.8" stroke="#ff2a2a" stroke-width="0.8" fill="none"/>
<text x="438.3" y="132.9" fill="#00dff0" font-size="3" text-anchor="middle"  font-weight="bold">P01</text>
<path d="M443.1 131.9 L466.6 131.9" stroke="#555" stroke-width="0.5"/>
<path d="M445.6 131.9 L462.0 157.0" stroke="#555" stroke-width="0.5"/>
<path d="M452.0 131.9 L469.6 167.2" stroke="#555" stroke-width="0.5"/>
<path d="M450.8 317.0 L470.5 317.0" stroke="#555" stroke-width="0.5"/>
<path d="M450.8 313.6 L450.8 318.4" stroke="#555" stroke-width="0.45"/>
<path d="M459.2 313.6 L459.2 318.4" stroke="#555" stroke-width="0.45"/>
<path d="M470.5 313.6 L470.5 318.4" stroke="#555" stroke-width="0.45"/>
<text x="455.0" y="316.2" fill="#00dff0" font-size="3" text-anchor="middle"  font-weight="bold">300</text>
<text x="464.8" y="316.2" fill="#00dff0" font-size="3" text-anchor="middle"  font-weight="bold">450</text>
<path d="M470.5 324.6 L492.0 324.6" stroke="#555" stroke-width="0.5"/>
<path d="M492.0 313.0 L492.0 326.0" stroke="#555" stroke-width="0.45"/>
<path d="M488.0 313.0 L488.0 317.0" stroke="#555" stroke-width="0.45"/>
<path d="M488.0 314.8 L492.0 314.8" stroke="#555" stroke-width="0.45"/>
<text x="481.0" y="323.8" fill="#00dff0" font-size="3" text-anchor="middle"  font-weight="bold">900</text>
<text x="490.0" y="314.0" fill="#00dff0" font-size="2.8" text-anchor="middle"  font-weight="bold">75</text>
<path d="M470.5 305.4 L470.5 327.8" stroke="#555" stroke-width="0.6"/>
<path d="M487.6 300.5 L488.4 302.9" stroke="#222" stroke-width="0.4"/>
<path d="M491.6 300.5 L492.4 302.9" stroke="#222" stroke-width="0.4"/>
<path d="M487.6 304.0 L488.4 306.4" stroke="#222" stroke-width="0.4"/>
<path d="M491.6 304.0 L492.4 306.4" stroke="#222" stroke-width="0.4"/>
<path d="M487.6 308.0 L488.4 310.4" stroke="#222" stroke-width="0.4"/>
<path d="M491.6 308.0 L492.4 310.4" stroke="#222" stroke-width="0.4"/>
<path d="M487.6 311.5 L488.4 313.9" stroke="#222" stroke-width="0.4"/>
<path d="M491.6 311.5 L492.4 313.9" stroke="#222" stroke-width="0.4"/>
<circle cx="470.5" cy="331.1" r="3.3" stroke="#ff2a2a" stroke-width="0.9" fill="none"/>
<text x="470.5" y="332.2" fill="#b03030" font-size="3" text-anchor="middle"  font-weight="bold">C</text>
<text x="459.5" y="337.6" fill="#1c1c1c" font-size="4.4" text-anchor="start" font-weight="bold" textLength="16" lengthAdjust="spacingAndGlyphs">SECTION</text>
<path d="M459.5 338.6 L475.5 338.6" stroke="#222" stroke-width="0.6"/>
<text x="460.0" y="341.6" fill="#00dff0" font-size="2.6" text-anchor="start" textLength="12" lengthAdjust="spacingAndGlyphs" font-weight="bold">SCALE 1:50</text>
<polygon points="486.1,338.2 484.4,341.2 480.9,341.2 479.1,338.2 480.9,335.2 484.4,335.2" stroke="#ff2a2a" stroke-width="0.9" fill="none"/>
<text x="482.6" y="339.3" fill="#b03030" font-size="3" text-anchor="middle"  font-weight="bold">A</text>
<path d="M476.0 338.0 L479.0 338.0" stroke="#ff2a2a" stroke-width="0.6"/>
</g>
<g>
<path d="M231.8 341.1 L368.2 341.1" stroke="#4c6284" stroke-width="0.9"/>
<path d="M231.8 348.6 L368.2 348.6" stroke="#4c6284" stroke-width="0.9"/>
<path d="M231.8 355.8 L368.2 355.8" stroke="#4c6284" stroke-width="0.9"/>
<path d="M231.8 362.8 L368.2 362.8" stroke="#4c6284" stroke-width="0.9"/>
<path d="M230.4 340.0 L230.4 364.0" stroke="#ff30ff" stroke-width="0.7"/>
<path d="M232.0 340.0 L232.0 365.8" stroke="#ff30ff" stroke-width="0.8"/>
<path d="M232.0 365.8 L368.2 365.8" stroke="#ff30ff" stroke-width="0.9"/>
<path d="M230.4 364.4 L238.0 364.4" stroke="#ff30ff" stroke-width="0.5"/>
<path d="M239.4 340.0 L239.4 364.0" stroke="#999" stroke-width="0.4" stroke-dasharray=".7 .7"/>
<path d="M240.8 340.0 L240.8 364.0" stroke="#999" stroke-width="0.4" stroke-dasharray=".7 .7"/>
<path d="M222.0 340.0 L222.0 361.0" stroke="#ffe020" stroke-width="0.8"/>
<path d="M225.6 340.0 L225.6 361.0" stroke="#ffe020" stroke-width="0.8"/>
<path d="M216.2 360.8 h16.4 v6.6 h98.6 v-1.4 h16 v1.4 h21" stroke="#ffe020" stroke-width="0.8" fill="none"/>
<path d="M216.2 360.8 v13.6 h16.4 v-1.8 h98.6 v3.6 h16 v-3.6 h21" stroke="#ffe020" stroke-width="0.8" fill="none"/>
<path d="M232.6 374.4 L255.0 374.4" stroke="#999" stroke-width="0.4" stroke-dasharray=".7 .7"/>
<rect x="219.7" y="364.6" width="9.6" height="9.6" stroke="#ffe020" stroke-width="0.7" fill="#fff8b0"/>
<circle cx="224.5" cy="369.4" r="3.6" stroke="#3c4e6c" stroke-width="0.5" fill="#566c90"/>
<circle cx="224.5" cy="369.4" r="1.4" stroke="#6ad8f0" stroke-width="0.3" fill="#6a96c8"/>
<rect x="334.0" y="364.6" width="9.6" height="9.6" stroke="#ffe020" stroke-width="0.7" fill="#fff8b0"/>
<circle cx="338.8" cy="369.4" r="3.6" stroke="#3c4e6c" stroke-width="0.5" fill="#566c90"/>
<circle cx="338.8" cy="369.4" r="1.4" stroke="#6ad8f0" stroke-width="0.3" fill="#6a96c8"/>
<path d="M205.4 369.4 L368.2 369.4" stroke="#7a2020" stroke-width="0.6" stroke-dasharray="3.4 .9 .9 .9"/>
<path d="M224.5 340.0 L224.5 386.4" stroke="#7a2020" stroke-width="0.6" stroke-dasharray="3.4 .9 .9 .9"/>
<path d="M338.8 340.0 L338.8 386.4" stroke="#7a2020" stroke-width="0.6" stroke-dasharray="3.4 .9 .9 .9"/>
<circle cx="202.3" cy="369.4" r="3" stroke="#ff2a2a" stroke-width="0.9" fill="none"/>
<text x="202.3" y="370.4" fill="#b03030" font-size="2.8" text-anchor="middle"  font-weight="bold">B</text>
<circle cx="229.9" cy="362.8" r="1.5" stroke="#22e022" stroke-width="0.3" fill="#22e022"/>
<text x="207.4" y="345.3" fill="#00dff0" font-size="2.5" text-anchor="start" textLength="7" font-weight="bold">WATER</text>
<path d="M215 344.4 H222 L230 358" stroke="#555" stroke-width="0.6" fill="none"/>
<rect x="199.7" y="355.4" width="8.8" height="3.8" stroke="#ff2a2a" stroke-width="0.8" fill="none"/>
<text x="204.1" y="358.2" fill="#00dff0" font-size="3" text-anchor="middle"  font-weight="bold">R01</text>
<path d="M208.5 357.2 H216 L221 366" stroke="#555" stroke-width="0.6" fill="none"/>
<path d="M298.8 346.6 L300.6 345.2" stroke="#e8d020" stroke-width="0.8"/>
<path d="M255.6 363.0 L255.6 368.0" stroke="#555" stroke-width="0.45"/>
<path d="M258.6 363.0 L258.6 368.0" stroke="#555" stroke-width="0.45"/>
<path d="M262.0 363.0 L262.0 368.0" stroke="#555" stroke-width="0.45"/>
<path d="M255.6 368.0 L255.6 376.0" stroke="#555" stroke-width="0.45"/>
<path d="M254.0 364.4 L264.0 364.4" stroke="#555" stroke-width="0.4"/>
<path d="M254.0 367.0 L264.0 367.0" stroke="#555" stroke-width="0.4"/>
<text x="255.0" y="365.6" fill="#00dff0" font-size="2.2" text-anchor="end"  font-weight="bold">75</text>
<text x="255.0" y="368.6" fill="#00dff0" font-size="2.2" text-anchor="end"  font-weight="bold">75</text>
<text x="255.0" y="372.0" fill="#00dff0" font-size="2.2" text-anchor="end"  font-weight="bold">75</text>
<text x="255.0" y="374.8" fill="#00dff0" font-size="2.2" text-anchor="end"  font-weight="bold">75</text>
<path d="M216.2 380.5 L347.3 380.5" stroke="#555" stroke-width="0.5"/>
<path d="M224.5 383.3 L338.8 383.3" stroke="#555" stroke-width="0.5"/>
<path d="M232.4 368.0 L331.2 368.0" stroke="#ffe020" stroke-width="1.5"/>
<path d="M347.3 368.0 L368.2 368.0" stroke="#ffe020" stroke-width="1.5"/>
<path d="M228.3 340.0 L228.3 362.0" stroke="#ff9cff" stroke-width="0.7"/>
<path d="M232.0 367.0 L368.2 367.0" stroke="#ff9cff" stroke-width="0.5"/>
<path d="M216.2 375.0 L216.2 382.0" stroke="#555" stroke-width="0.45"/>
<path d="M224.5 375.0 L224.5 382.0" stroke="#555" stroke-width="0.45"/>
<path d="M232.6 375.0 L232.6 382.0" stroke="#555" stroke-width="0.45"/>
<path d="M331.2 375.0 L331.2 382.0" stroke="#555" stroke-width="0.45"/>
<path d="M338.8 375.0 L338.8 382.0" stroke="#555" stroke-width="0.45"/>
<path d="M347.3 375.0 L347.3 382.0" stroke="#555" stroke-width="0.45"/>
<text x="220.4" y="379.8" fill="#00dff0" font-size="2.8" text-anchor="middle"  font-weight="bold">300</text>
<text x="228.6" y="379.8" fill="#00dff0" font-size="2.8" text-anchor="middle"  font-weight="bold">300</text>
<text x="335.0" y="379.8" fill="#00dff0" font-size="2.8" text-anchor="middle"  font-weight="bold">300</text>
<text x="343.0" y="379.8" fill="#00dff0" font-size="2.8" text-anchor="middle"  font-weight="bold">300</text>
<text x="281.8" y="379.6" fill="#00dff0" font-size="3" text-anchor="middle"  font-weight="bold">6000</text>
<path d="M279.0 380.9 L285.0 380.9" stroke="#ff2a2a" stroke-width="0.5"/>
<text x="281.8" y="383.6" fill="#00dff0" font-size="3" text-anchor="middle"  font-weight="bold">6000</text>
<circle cx="224.5" cy="389.7" r="3.3" stroke="#ff2a2a" stroke-width="0.9" fill="none"/>
<circle cx="338.8" cy="389.7" r="3.3" stroke="#ff2a2a" stroke-width="0.9" fill="none"/>
<text x="224.5" y="390.8" fill="#b03030" font-size="3" text-anchor="middle"  font-weight="bold">1</text>
<text x="338.8" y="390.8" fill="#b03030" font-size="3" text-anchor="middle"  font-weight="bold">2</text>
<text x="270.4" y="395.0" fill="#1c1c1c" font-size="4.4" text-anchor="start" font-weight="bold" textLength="21.6" lengthAdjust="spacingAndGlyphs">ROOF PLAN</text>
<path d="M270.4 396.0 L292.0 396.0" stroke="#222" stroke-width="0.6"/>
<text x="270.9" y="399.0" fill="#00dff0" font-size="2.6" text-anchor="start" textLength="12" lengthAdjust="spacingAndGlyphs" font-weight="bold">SCALE 1:50</text>
<polygon points="300.3,394.6 298.6,397.6 295.1,397.6 293.3,394.6 295.1,391.6 298.6,391.6" stroke="#ff2a2a" stroke-width="0.9" fill="none"/>
<path d="M286.0 394.2 L293.4 394.2" stroke="#ff2a2a" stroke-width="0.6"/>
</g>
<g>
<path d="M219.0 400.6 L219.0 414.4" stroke="#5a6ae8" stroke-width="0.5"/>
<path d="M221.0 400.6 L221.0 414.4" stroke="#5a6ae8" stroke-width="0.5"/>
<path d="M219.0 414.4 L221.0 414.4" stroke="#5a6ae8" stroke-width="0.5"/>
<path d="M224.9 400.6 L224.9 423.0" stroke="#ffe020" stroke-width="2.4"/>
<path d="M224.9 400.6 L224.9 423.0" stroke="#d8661c" stroke-width="1.3"/>
<path d="M228.0 426.3 L368.2 426.3" stroke="#ffe020" stroke-width="3.2"/>
<path d="M228.0 426.3 L368.2 426.3" stroke="#d8661c" stroke-width="1.7"/>
<path d="M228.0 426.3 L368.2 426.3" stroke="#8a3a10" stroke-width="0.4" stroke-dasharray="1 1"/>
<rect x="218.3" y="420.2" width="13.2" height="13" fill="#fffcc8" stroke="#ffee5a" stroke-width=".6"/>
<rect x="221.1" y="422.9" width="7.6" height="7.8" fill="#454545"/>
<rect x="332.7" y="420.2" width="13.2" height="13" fill="#fffcc8" stroke="#ffee5a" stroke-width=".6"/>
<rect x="335.5" y="422.9" width="7.6" height="7.8" fill="#454545"/>
<path d="M248.4 400.6 L230.0 421.6" stroke="#555" stroke-width="0.6"/>
<circle cx="230.0" cy="421.8" r="1.5" stroke="#22e022" stroke-width="0.3" fill="#22e022"/>
<clipPath id="cw236"><rect x="0" y="0" width="368.2" height="548"/></clipPath>
<g clip-path="url(#cw236)"><rect x="236.5" y="429.2" width="39.80000000000001" height="4" rx=".8" fill="#f4f8ff" stroke="#8aa4e0" stroke-width=".6"/></g>
<text x="248.4" y="431.8" fill="#e8d820" font-size="2.2" text-anchor="middle"  font-weight="bold">900</text>
<text x="263.6" y="431.8" fill="#e8d820" font-size="2.2" text-anchor="middle"  font-weight="bold">900</text>
<path d="M238.5 428.0 L238.5 429.2" stroke="#555" stroke-width="0.4"/>
<clipPath id="cw288"><rect x="0" y="0" width="368.2" height="548"/></clipPath>
<g clip-path="url(#cw288)"><rect x="288" y="429.2" width="39.39999999999998" height="4" rx=".8" fill="#f4f8ff" stroke="#8aa4e0" stroke-width=".6"/></g>
<text x="299.8" y="431.8" fill="#e8d820" font-size="2.2" text-anchor="middle"  font-weight="bold">900</text>
<text x="314.8" y="431.8" fill="#e8d820" font-size="2.2" text-anchor="middle"  font-weight="bold">900</text>
<path d="M290.0 428.0 L290.0 429.2" stroke="#555" stroke-width="0.4"/>
<clipPath id="cw350"><rect x="0" y="0" width="368.2" height="548"/></clipPath>
<g clip-path="url(#cw350)"><rect x="350.8" y="429.2" width="21.19999999999999" height="4" rx=".8" fill="#f4f8ff" stroke="#8aa4e0" stroke-width=".6"/></g>
<text x="357.2" y="431.8" fill="#e8d820" font-size="2.2" text-anchor="middle"  font-weight="bold">900</text>
<text x="365.2" y="431.8" fill="#e8d820" font-size="2.2" text-anchor="middle"  font-weight="bold">900</text>
<path d="M352.8 428.0 L352.8 429.2" stroke="#555" stroke-width="0.4"/>
<circle cx="202.3" cy="426.5" r="3" stroke="#ff2a2a" stroke-width="0.9" fill="none"/>
<text x="202.3" y="427.5" fill="#b03030" font-size="2.8" text-anchor="middle"  font-weight="bold">B</text>
<path d="M205.4 426.5 L218.0 426.5" stroke="#7a2020" stroke-width="0.6" stroke-dasharray="3.4 .9 .9 .9"/>
<path d="M339.3 400.6 L339.3 420.0" stroke="#7a2020" stroke-width="0.6" stroke-dasharray="3.4 .9 .9 .9"/>
<path d="M224.9 433.0 L224.9 443.6" stroke="#555" stroke-width="0.5"/>
<path d="M339.3 433.0 L339.3 443.6" stroke="#555" stroke-width="0.5"/>
<path d="M224.9 440.8 L339.3 440.8" stroke="#555" stroke-width="0.5"/>
<text x="282.0" y="440.0" fill="#00dff0" font-size="3" text-anchor="middle"  font-weight="bold">6000</text>
<circle cx="224.9" cy="447.1" r="3.3" stroke="#ff2a2a" stroke-width="0.9" fill="none"/>
<circle cx="339.3" cy="447.1" r="3.3" stroke="#ff2a2a" stroke-width="0.9" fill="none"/>
<text x="224.9" y="448.2" fill="#b03030" font-size="3" text-anchor="middle"  font-weight="bold">1</text>
<text x="339.3" y="448.2" fill="#b03030" font-size="3" text-anchor="middle"  font-weight="bold">2</text>
<text x="270.4" y="449.8" fill="#1c1c1c" font-size="4.4" text-anchor="start" font-weight="bold" textLength="36.6" lengthAdjust="spacingAndGlyphs">FIRST FLOOR PLAN</text>
<path d="M270.4 450.8 L307.0 450.8" stroke="#222" stroke-width="0.6"/>
<text x="270.9" y="453.8" fill="#00dff0" font-size="2.6" text-anchor="start" textLength="12" lengthAdjust="spacingAndGlyphs" font-weight="bold">SCALE 1:50</text>
<polygon points="309.1,450.6 307.4,453.6 303.9,453.6 302.1,450.6 303.9,447.6 307.4,447.6" stroke="#ff2a2a" stroke-width="0.9" fill="none"/>
<path d="M296.0 450.2 L302.2 450.2" stroke="#ff2a2a" stroke-width="0.6"/>
</g>
<g>
<rect x="204.8" y="461.2" width="9.2" height="36.4" fill="#ff6464"/>
<rect x="206.9" y="464.4" width="5.3" height="4.9" fill="#fff"/>
<rect x="206.9" y="471.4" width="5.3" height="4.9" fill="#fff"/>
<rect x="206.9" y="478.5" width="5.3" height="4.9" fill="#fff"/>
<rect x="206.9" y="485.6" width="5.3" height="4.9" fill="#fff"/>
<rect x="204.8" y="489.4" width="161" height="8.3" fill="#ff6464"/>
<rect x="206.9" y="491.2" width="5.4" height="4.7" fill="#fff"/>
<rect x="214.1" y="491.2" width="5.4" height="4.7" fill="#fff"/>
<rect x="221.3" y="491.2" width="5.4" height="4.7" fill="#fff"/>
<rect x="228.5" y="491.2" width="5.4" height="4.7" fill="#fff"/>
<rect x="235.7" y="491.2" width="5.4" height="4.7" fill="#fff"/>
<rect x="242.9" y="491.2" width="5.4" height="4.7" fill="#fff"/>
<rect x="250.1" y="491.2" width="5.4" height="4.7" fill="#fff"/>
<rect x="257.3" y="491.2" width="5.4" height="4.7" fill="#fff"/>
<rect x="264.5" y="491.2" width="5.4" height="4.7" fill="#fff"/>
<rect x="271.7" y="491.2" width="5.4" height="4.7" fill="#fff"/>
<rect x="278.9" y="491.2" width="5.4" height="4.7" fill="#fff"/>
<rect x="286.1" y="491.2" width="5.4" height="4.7" fill="#fff"/>
<rect x="293.3" y="491.2" width="5.4" height="4.7" fill="#fff"/>
<rect x="300.5" y="491.2" width="5.4" height="4.7" fill="#fff"/>
<rect x="307.7" y="491.2" width="5.4" height="4.7" fill="#fff"/>
<rect x="314.9" y="491.2" width="5.4" height="4.7" fill="#fff"/>
<rect x="322.1" y="491.2" width="5.4" height="4.7" fill="#fff"/>
<rect x="329.3" y="491.2" width="5.4" height="4.7" fill="#fff"/>
<rect x="336.5" y="491.2" width="5.4" height="4.7" fill="#fff"/>
<rect x="343.7" y="491.2" width="5.4" height="4.7" fill="#fff"/>
<rect x="350.9" y="491.2" width="5.4" height="4.7" fill="#fff"/>
<rect x="358.1" y="491.2" width="5.4" height="4.7" fill="#fff"/>
<path d="M235.7 479.6 V488.6 H213.6 V467.1 H223.6" stroke="#ff30ff" stroke-width="1.0" fill="none"/>
<path d="M234.04999999999998 479.6 V486.95000000000005 H215.25 V468.75 H223.6" stroke="#ff30ff" stroke-width="1.0" fill="none"/>
<path d="M232.39999999999998 479.6 V485.3 H216.9 V470.40000000000003 H223.6" stroke="#ff30ff" stroke-width="1.0" fill="none"/>
<path d="M230.75 479.6 V483.65000000000003 H218.54999999999998 V472.05 H223.6" stroke="#ff30ff" stroke-width="1.0" fill="none"/>
<rect x="219.4" y="472.2" width="11.2" height="11.4" fill="#ffe838"/>
<rect x="223.4" y="463.6" width="2.6" height="8" fill="#e8d040"/><rect x="223.8" y="461.4" width="1.8" height="3" fill="#7a5ad0"/>
<path d="M229.0 477.0 L366.0 477.0" stroke="#ffe020" stroke-width="1.0"/>
<path d="M229.0 477.8 L366.0 477.8" stroke="#d8661c" stroke-width="1.3"/>
<path d="M229.0 478.7 L366.0 478.7" stroke="#8030c0" stroke-width="0.6" stroke-dasharray="1.4 .8"/>
<path d="M229.0 480.2 L366.0 480.2" stroke="#666" stroke-width="0.5"/>
<path d="M229.0 484.2 L336.0 484.2" stroke="#999" stroke-width="0.4"/>
<rect x="221.5" y="474.5" width="7.4" height="7.4" fill="#444"/>
<rect x="335.7" y="474.5" width="7.4" height="7.4" fill="#444"/>
<circle cx="229.3" cy="472.8" r="1.6" stroke="#22e022" stroke-width="0.3" fill="#22e022"/>
<path d="M235.8 480.2 h3.2 v1.4 h-.8 v3 h-1.6 v-3 h-.8 z" fill="#384858"/>
<path d="M235.8 485.0 L239.0 485.0" stroke="#22e022" stroke-width="0.5"/>
<path d="M272.7 480.2 h3.2 v1.4 h-.8 v3 h-1.6 v-3 h-.8 z" fill="#384858"/>
<path d="M272.7 485.0 L275.9 485.0" stroke="#22e022" stroke-width="0.5"/>
<path d="M288.09999999999997 480.2 h3.2 v1.4 h-.8 v3 h-1.6 v-3 h-.8 z" fill="#384858"/>
<path d="M288.1 485.0 L291.3 485.0" stroke="#22e022" stroke-width="0.5"/>
<path d="M325.0 480.2 h3.2 v1.4 h-.8 v3 h-1.6 v-3 h-.8 z" fill="#384858"/>
<path d="M325.0 485.0 L328.2 485.0" stroke="#22e022" stroke-width="0.5"/>
<text x="256.3" y="483.6" fill="#00dff0" font-size="3" text-anchor="middle"  font-weight="bold">1350</text>
<text x="282.5" y="483.6" fill="#00dff0" font-size="3" text-anchor="middle"  font-weight="bold">1350</text>
<text x="308.2" y="483.6" fill="#00dff0" font-size="3" text-anchor="middle"  font-weight="bold">1350</text>
<path d="M213.8 478.0 L229.0 478.0" stroke="#7a2020" stroke-width="0.5"/>
<text x="264.2" y="468.6" fill="#1c1c1c" font-size="4.2" text-anchor="start" font-weight="bold" textLength="36.8" lengthAdjust="spacingAndGlyphs">BADMINTON &amp; BASKET</text>
<rect x="279.0" y="470.4" width="7.6" height="1.6" stroke="#ff2a2a" stroke-width="0.4" fill="#8ef0f8"/>
<rect x="279.0" y="472.4" width="7.6" height="1.6" stroke="#ff2a2a" stroke-width="0.4" fill="#8ef0f8"/>
<rect x="279.0" y="474.4" width="7.6" height="1.6" stroke="#ff2a2a" stroke-width="0.4" fill="#8ef0f8"/>
<circle cx="282.8" cy="477.0" r="0.6" stroke="#ff2a2a" stroke-width="0.2" fill="#ff2a2a"/>
<circle cx="287.4" cy="477.0" r="0.6" stroke="#ff2a2a" stroke-width="0.2" fill="#ff2a2a"/>
<rect x="314.3" y="460.5" width="9.3" height="3.8" stroke="#ff2a2a" stroke-width="0.8" fill="none"/>
<text x="318.9" y="463.3" fill="#00dff0" font-size="3" text-anchor="middle"  font-weight="bold">F01</text>
<path d="M314.3 462.4 H310.2 L300 477.6" stroke="#555" stroke-width="0.6" fill="none"/>
<text x="314.3" y="468.0" fill="#00dff0" font-size="2.6" text-anchor="start" textLength="8.8" font-weight="bold">STONE</text>
<path d="M313.0 467.2 L304.8 478.0" stroke="#555" stroke-width="0.5"/>
<circle cx="300.0" cy="477.8" r="0.6" stroke="#00dff0" stroke-width="0.2" fill="#00dff0"/>
<circle cx="304.8" cy="478.0" r="0.6" stroke="#00dff0" stroke-width="0.2" fill="#00dff0"/>
<circle cx="199.9" cy="477.9" r="3" stroke="#ff2a2a" stroke-width="0.9" fill="none"/>
<text x="199.9" y="478.9" fill="#b03030" font-size="2.8" text-anchor="middle"  font-weight="bold">B</text>
<path d="M203.0 477.9 L213.8 477.9" stroke="#ff2a2a" stroke-width="0.6"/>
<path d="M224.7 460.6 L224.7 507.6" stroke="#c02020" stroke-width="0.6" stroke-dasharray="3.4 .9 .9 .9"/>
<path d="M339.6 460.6 L339.6 507.6" stroke="#a03030" stroke-width="0.6" stroke-dasharray="3.4 .9 .9 .9"/>
<path d="M224.7 504.6 L339.6 504.6" stroke="#555" stroke-width="0.5"/>
<text x="282.5" y="503.8" fill="#00dff0" font-size="3" text-anchor="middle"  font-weight="bold">6000</text>
<circle cx="224.7" cy="510.8" r="3.2" stroke="#ff2a2a" stroke-width="0.9" fill="none"/>
<text x="224.7" y="511.9" fill="#b03030" font-size="3" text-anchor="middle"  font-weight="bold">1</text>
<circle cx="339.6" cy="510.8" r="3.2" stroke="#ff2a2a" stroke-width="0.9" fill="none"/>
<rect x="257.9" y="507.7" width="9.3" height="3.8" stroke="#ff2a2a" stroke-width="0.8" fill="none"/>
<text x="262.5" y="510.5" fill="#00dff0" font-size="3" text-anchor="middle"  font-weight="bold">0.00</text>
<path d="M267.2 509.6 H270.2 L279.6 493.8" stroke="#555" stroke-width="0.6" fill="none"/>
<circle cx="279.6" cy="493.8" r="0.7" stroke="#00dff0" stroke-width="0.2" fill="#00dff0"/>
<text x="198.0" y="509.6" fill="#00dff0" font-size="2.5" text-anchor="start" textLength="7" font-weight="bold">STONE</text>
<path d="M206 508.8 H210.8 L220 493.8" stroke="#555" stroke-width="0.6" fill="none"/>
<circle cx="220.0" cy="493.8" r="0.7" stroke="#00dff0" stroke-width="0.2" fill="#00dff0"/>
<text x="282.2" y="513.0" fill="#1c1c1c" font-size="4.4" text-anchor="start" font-weight="bold" textLength="40.8" lengthAdjust="spacingAndGlyphs">GROUND FLOOR PLAN</text>
<path d="M282.2 514.0 L323.0 514.0" stroke="#222" stroke-width="0.6"/>
<text x="282.7" y="517.0" fill="#00dff0" font-size="2.6" text-anchor="start" textLength="12" lengthAdjust="spacingAndGlyphs" font-weight="bold">SCALE 1:50</text>
<polygon points="324.1,514.2 322.4,517.2 318.9,517.2 317.1,514.2 318.9,511.2 322.4,511.2" stroke="#ff2a2a" stroke-width="0.9" fill="none"/>
<path d="M311.0 513.8 L317.2 513.8" stroke="#ff2a2a" stroke-width="0.6"/>
</g>
<g>
<text x="614.4" y="115.6" fill="#202040" font-size="3" text-anchor="start" font-weight="bold" textLength="22">N O T E S</text>
<rect x="616.3" y="123.7" width="8.2" height="3.2" stroke="#ff2a2a" stroke-width="0.8" fill="#d8f8fc"/>
<text x="620.4" y="126.2" fill="#00dff0" font-size="3" text-anchor="middle"  font-weight="bold">A01</text>
<text x="628.8" y="126.3" fill="#00dff0" font-size="2.7" text-anchor="start" textLength="39.6" lengthAdjust="spacingAndGlyphs" font-weight="bold">CUSTOMISE REINFORCED CONCRETE</text>
<rect x="616.3" y="129.8" width="8.2" height="3.2" stroke="#ff2a2a" stroke-width="0.8" fill="#d8f8fc"/>
<text x="620.4" y="132.3" fill="#00dff0" font-size="3" text-anchor="middle"  font-weight="bold">A02</text>
<text x="628.8" y="132.4" fill="#00dff0" font-size="2.7" text-anchor="start" textLength="18.8" lengthAdjust="spacingAndGlyphs" font-weight="bold">PAINTED PLASTER</text>
<rect x="616.3" y="135.8" width="8.2" height="3.2" stroke="#ff2a2a" stroke-width="0.8" fill="#d8f8fc"/>
<text x="620.4" y="138.3" fill="#00dff0" font-size="3" text-anchor="middle"  font-weight="bold">A03</text>
<text x="628.8" y="138.4" fill="#00dff0" font-size="2.7" text-anchor="start" textLength="10.6" lengthAdjust="spacingAndGlyphs" font-weight="bold">TEAK / FRAME</text>
<rect x="616.3" y="141.9" width="8.2" height="3.2" stroke="#ff2a2a" stroke-width="0.8" fill="#d8f8fc"/>
<text x="620.4" y="144.4" fill="#00dff0" font-size="3" text-anchor="middle"  font-weight="bold">A04</text>
<text x="628.8" y="144.5" fill="#00dff0" font-size="2.7" text-anchor="start" textLength="25.4" lengthAdjust="spacingAndGlyphs" font-weight="bold">REINFORCED CONCRETE</text>
<rect x="616.3" y="147.9" width="8.2" height="3.2" stroke="#ff2a2a" stroke-width="0.8" fill="#d8f8fc"/>
<text x="620.4" y="150.4" fill="#00dff0" font-size="3" text-anchor="middle"  font-weight="bold">A05</text>
<text x="628.8" y="150.5" fill="#00dff0" font-size="2.7" text-anchor="start" textLength="26.2" lengthAdjust="spacingAndGlyphs" font-weight="bold">STONE LOCAL SANDSTONE</text>
<rect x="616.3" y="154.0" width="8.2" height="3.2" stroke="#ff2a2a" stroke-width="0.8" fill="#d8f8fc"/>
<text x="620.4" y="156.5" fill="#00dff0" font-size="3" text-anchor="middle"  font-weight="bold">A06</text>
<text x="628.8" y="156.6" fill="#00dff0" font-size="2.7" text-anchor="start" textLength="5.6" lengthAdjust="spacingAndGlyphs" font-weight="bold">STEEL</text>
<path d="M611.5 209.6 L682.0 209.6" stroke="#9a4a58" stroke-width="0.6"/>
<path d="M611.5 215.2 L682.0 215.2" stroke="#9a4a58" stroke-width="0.6"/>
<path d="M611.5 220.8 L682.0 220.8" stroke="#9a4a58" stroke-width="0.6"/>
<path d="M611.5 226.4 L682.0 226.4" stroke="#9a4a58" stroke-width="0.6"/>
<path d="M611.5 232.0 L682.0 232.0" stroke="#9a4a58" stroke-width="0.6"/>
<path d="M611.5 237.6 L682.0 237.6" stroke="#9a4a58" stroke-width="0.6"/>
<path d="M611.5 243.2 L682.0 243.2" stroke="#9a4a58" stroke-width="0.6"/>
<path d="M611.5 248.8 L682.0 248.8" stroke="#9a4a58" stroke-width="0.6"/>
<path d="M611.5 254.4 L682.0 254.4" stroke="#9a4a58" stroke-width="0.6"/>
<path d="M611.5 260.0 L682.0 260.0" stroke="#9a4a58" stroke-width="0.6"/>
<path d="M611.5 265.6 L682.0 265.6" stroke="#9a4a58" stroke-width="0.6"/>
<path d="M611.5 271.2 L682.0 271.2" stroke="#9a4a58" stroke-width="0.6"/>
<path d="M617.4 209.6 L617.4 271.2" stroke="#9a4a58" stroke-width="0.6"/>
<path d="M665.0 209.6 L665.0 271.2" stroke="#9a4a58" stroke-width="0.6"/>
<path d="M671.4 209.6 L671.4 271.2" stroke="#9a4a58" stroke-width="0.6"/>
<path d="M611.5 447.3 L682.0 447.3" stroke="#9a4a58" stroke-width="0.7"/>
<text x="612.4" y="451.4" fill="#00dff0" font-size="2.6" text-anchor="start" textLength="10.6" font-weight="bold">TITLE</text>
<text x="645.6" y="459.0" fill="#22e022" font-size="4.2" text-anchor="middle" textLength="37" lengthAdjust="spacingAndGlyphs" font-weight="bold">PARTIAL FACADE AT</text>
<text x="645.6" y="463.6" fill="#22e022" font-size="4.2" text-anchor="middle" textLength="32.6" lengthAdjust="spacingAndGlyphs" font-weight="bold">NORTH ELEVATION</text>
<path d="M611.5 476.4 L682.0 476.4" stroke="#9a4a58" stroke-width="0.7"/>
<path d="M611.5 497.9 L682.0 497.9" stroke="#9a4a58" stroke-width="0.7"/>
<path d="M611.5 503.5 L682.0 503.5" stroke="#9a4a58" stroke-width="0.7"/>
<path d="M624.5 481.6 L682.0 481.6" stroke="#9a4a58" stroke-width="0.5"/>
<path d="M624.5 486.6 L682.0 486.6" stroke="#9a4a58" stroke-width="0.5"/>
<path d="M624.5 492.0 L682.0 492.0" stroke="#9a4a58" stroke-width="0.5"/>
<path d="M611.5 513.4 L646.2 513.4" stroke="#9a4a58" stroke-width="0.7"/>
<path d="M624.5 476.4 L624.5 497.9" stroke="#9a4a58" stroke-width="0.7"/>
<path d="M646.2 476.4 L646.2 519.4" stroke="#9a4a58" stroke-width="0.7"/>
<path d="M660.8 497.9 L660.8 519.4" stroke="#9a4a58" stroke-width="0.7"/>
<text x="653.0" y="479.0" fill="#22e022" font-size="2.4" text-anchor="start" textLength="5" font-weight="bold">DATE</text>
<text x="673.8" y="479.0" fill="#22e022" font-size="2.4" text-anchor="start" textLength="8" font-weight="bold">SCALE</text>
<text x="613.4" y="491.0" fill="#22e022" font-size="3" text-anchor="start" textLength="10" font-weight="bold">1 : 50</text>
<text x="662.6" y="513.4" fill="#3ee03e" font-size="8.6" text-anchor="start" font-weight="normal" textLength="19.4" lengthAdjust="spacingAndGlyphs">4101</text>
</g>
<path d="M13.2 480.6 V523.4 H39.8 Z" stroke="#3d66d0" stroke-width="1.1" fill="none"/>
<path d="M13.2 519 h4.4 v4.4" stroke="#3d66d0" stroke-width="1" fill="none"/>
<path d="M13.8 490.4 l3.2 2.8 l3.2 -2.8 M17 493.2 v4.4" stroke="#3d66d0" stroke-width="1" fill="none"/>
<path d="M28.4 516.4 l5.4 6 M33.8 516.4 l-5.4 6" stroke="#3d66d0" stroke-width="1" fill="none"/>
</svg>
<div class="a" style="left:328px;top:479.2px;width:372.6px;height:15.6px;background:rgba(128,128,128,.86);"></div>
<span class="t " style="left:328.6px;top:479.1px;font-family:'Liberation Mono','DejaVu Sans Mono',monospace;font-size:6.25px;letter-spacing:0;color:#fafafa;">Autodesk DWG.&nbsp; This file is a TrustedDWG last saved by an Autodesk application or Autodesk licensed</span>
<span class="t " style="left:328.6px;top:486.7px;font-family:'Liberation Mono','DejaVu Sans Mono',monospace;font-size:6.25px;letter-spacing:0;color:#fafafa;">application.</span>
<div class="a" style="left:328px;top:498px;width:32px;height:7.8px;background:#6c6c6c;border-radius:1px"></div>
<span class="t " style="left:329px;top:497.5px;font-family:'Liberation Mono','DejaVu Sans Mono',monospace;font-size:6.25px;letter-spacing:0;color:#fafafa;">Command:</span>
<div class="a" style="left:328px;top:508.6px;width:32px;height:7.8px;background:#6c6c6c;border-radius:1px"></div>
<span class="t " style="left:329px;top:508.1px;font-family:'Liberation Mono','DejaVu Sans Mono',monospace;font-size:6.25px;letter-spacing:0;color:#fafafa;">Command:</span>
<div class="a" style="left:296.6px;top:518.4px;width:432.6px;height:13.3px;background:rgba(255,255,255,.72);border-radius:1px"></div>
<div class="a" style="left:296.6px;top:518.4px;width:28.8px;height:13.3px;background:#717171;border-radius:1px 0 0 1px"></div>
<div class="a" style="left:298.4px;top:520px;width:1.4px;height:10px;background:repeating-linear-gradient(#aaa 0 1px,#666 1px 2px);"></div>
<span class="t " style="left:345px;top:520.5px;font-family:'Liberation Mono','DejaVu Sans Mono',monospace;font-size:6.25px;letter-spacing:0;color:#fafafa;font-style:italic;color:#8c8c8c">Type a command</span>
<svg width="1024" height="548" viewBox="0 0 1024 548" fill="none" stroke-linecap="round" stroke-linejoin="round">
<path d="M303.8 522.6 l4.4 4.6 M308.2 522.6 l-4.4 4.6" stroke="#fff" stroke-width="1.1"/>
<path d="M314.6 522 a2 2 0 0 0 2.6 2.6 l3.4 3.6 l1.2 -1.2 l-3.6 -3.4 a2 2 0 0 0 -2.4 -2.6 l1.2 1.4 l-1 1 z" fill="#fff"/>
<rect x="328" y="521.4" width="6.6" height="6" rx=".8" fill="#c4cad6" stroke="#6a7aa0" stroke-width=".6"/><path d="M329.4 523 l1.6 1.4 l-1.6 1.4 M332 526 h1.6" stroke="#3a4a78" stroke-width=".6"/>
<path d="M337.4 524 h2.6 l-1.3 1.6 z" fill="#6a6a6a"/>
<path d="M723.2 526 h3 l-1.5 -1.9 z" fill="#333"/>
<path d="M988.6 107.8 h4.6" stroke="#f2f2f2" stroke-width="1.6"/>
<rect x="998.6" y="104.8" width="4" height="4.6" stroke="#f2f2f2" stroke-width=".9"/><path d="M1000 104.6 v-1.2 h3.8 v4.6 h-1" stroke="#f2f2f2" stroke-width=".7"/>
<path d="M1009.8 104.4 l3.6 4.4 M1013.4 104.4 l-3.6 4.4" stroke="#f2f2f2" stroke-width="1"/>
<rect x="1001" y="237" width="17.4" height="71.4" rx="2.6" fill="#9a9a9a" stroke="#7e7e7e" stroke-width=".8"/>
<rect x="1001.9" y="237.9" width="15.6" height="69.6" rx="2" stroke="#a8a8a8" stroke-width=".5"/>
<circle cx="1015.8" cy="239.8" r="1.3" stroke="#c0c0c0" stroke-width=".5"/>
<path d="M1003.4 242.8 h9.8" stroke="#b4b4b4" stroke-width=".6"/>
<rect x="1004" y="249.2" width="9" height="9" rx="2.6" stroke="#bdbdbd" stroke-width=".8"/><circle cx="1008.4" cy="253.8" r="2.6" stroke="#bdbdbd" stroke-width=".7"/><ellipse cx="1012.4" cy="257.8" rx="2.4" ry="1.2" fill="#9a9a9a" stroke="#bdbdbd" stroke-width=".6"/><circle cx="1010.6" cy="256.8" r=".7" fill="#5a86d8"/>
<path d="M1006.4 273 v-5.4 q0 -1 .9 -1 t.9 1 v-2.2 q0 -1 .9 -1 t.9 1 v-.4 q0 -1 .9 -1 t.9 1 v1.2 q0 -.9 .9 -.9 t.9 .9 v5.8 q0 3.6 -3.4 3.6 q-2.6 0 -3.6 -2.2 l-1.8 -3 q.6 -1 1.6 0 z" stroke="#bdbdbd" stroke-width=".7"/>
<path d="M1003.8 280.2 l7 7 M1010.8 280.2 l-7 7" stroke="#c0c0c0" stroke-width=".7"/><path d="M1003.8 280.2 h1.6 M1003.8 280.2 v1.6 M1010.8 280.2 h-1.6 M1010.8 280.2 v1.6 M1003.8 287.2 h1.6 M1003.8 287.2 v-1.6" stroke="#c0c0c0" stroke-width=".6"/><circle cx="1012" cy="287.4" r="2" fill="#9a9a9a" stroke="#c0c0c0" stroke-width=".7"/><path d="M1013.4 289 l1.8 2" stroke="#c0c0c0" stroke-width=".9"/>
<path d="M1009.4 296.4 h1.6" stroke="#c4c4c4" stroke-width=".6"/><rect x="1014.2" y="303.6" width="2.6" height="2.6" stroke="#bdbdbd" stroke-width=".5"/>
<path d="M1020.7 98 V532" stroke="#80635e" stroke-width=".8"/>
<rect x="776.4" y="532.4" width="244.6" height="15.6" fill="#444" stroke="#5a5a5a" stroke-width=".6"/>
<path d="M798.6 533.6 v12.4" stroke="#333" stroke-width=".8" stroke-linecap="butt"/>
<path d="M853.9 533.6 v12.4" stroke="#333" stroke-width=".8" stroke-linecap="butt"/>
<path d="M867.3 533.6 v12.4" stroke="#333" stroke-width=".8" stroke-linecap="butt"/>
<path d="M889.1 533.6 v12.4" stroke="#333" stroke-width=".8" stroke-linecap="butt"/>
<path d="M928.8 533.6 v12.4" stroke="#333" stroke-width=".8" stroke-linecap="butt"/>
<path d="M951.1 533.6 v12.4" stroke="#333" stroke-width=".8" stroke-linecap="butt"/>
<path d="M964.8 533.6 v12.4" stroke="#333" stroke-width=".8" stroke-linecap="butt"/>
<path d="M979.7 533.6 v12.4" stroke="#333" stroke-width=".8" stroke-linecap="butt"/>
<path d="M992.6 533.6 v12.4" stroke="#333" stroke-width=".8" stroke-linecap="butt"/>
<rect x="800.4" y="534.2" width="11.2" height="11.2" fill="#6688cc"/><rect x="868.6" y="534.2" width="11.2" height="11.2" fill="#6688cc"/>
<path d="M802.8 536 v7.4 h1.4" stroke="#fff" stroke-width="1"/><path d="M805.4 543.6 h4.8" stroke="#fff" stroke-width=".9" stroke-dasharray=".9 .9"/>
<circle cx="818.6" cy="540.2" r="3.2" stroke="#e8e8e8" stroke-width=".8"/><path d="M818.6 540.2 l4.4 -3.4 M818.6 540.2 h3.4" stroke="#e8e8e8" stroke-width=".7"/>
<path d="M837 536 l5 8" stroke="#e04848" stroke-width=".9"/><path d="M840.6 535.4 l-1.2 9.2" stroke="#48c060" stroke-width=".9"/>
<path d="M857.4 543.6 h8 M857.4 543.6 l6.6 -6" stroke="#e8e8e8" stroke-width=".8"/><path d="M860.8 543.6 a3.4 3.4 0 0 0 -.9 -2.3" stroke="#e8e8e8" stroke-width=".6"/>
<rect x="871" y="536.6" width="6.6" height="6.8" stroke="#fff" stroke-width=".8"/><path d="M870 535.6 l1 1 M878.6 535.6 l-1 1 M870 544.4 l1 -1 M878.6 544.4 l-1 -1" stroke="#fff" stroke-width=".7"/>
<path d="M827.4 539.4 h3.2 l-1.6 2 z" fill="#f0f0f0"/>
<path d="M848.3 539.4 h3.2 l-1.6 2 z" fill="#f0f0f0"/>
<path d="M882.5 539.4 h3.2 l-1.6 2 z" fill="#f0f0f0"/>
<path d="M945.3 539.4 h3.2 l-1.6 2 z" fill="#f0f0f0"/>
<rect x="894" y="537" width="5.4" height="6" stroke="#e8e8e8" stroke-width=".7" stroke-dasharray="1.2 .8"/><path d="M892.6 535.6 l1.4 1.4 M900.8 535.6 l-1.4 1.4 M892.6 544.4 l1.4 -1.4 M900.8 544.4 l-1.4 -1.4" stroke="#e8e8e8" stroke-width=".7"/>
<path d="M906.0 544.4 l3 -5 l1 -3.4 l1 3.4 l-1.4 1.8 l2.8 3.2 M908.8 541 l-1.4 1.8" stroke="#f4f4f4" stroke-width="1.1"/><circle cx="912.0" cy="536.6" r=".9" stroke="#f4f4f4" stroke-width=".5"/>
<path d="M918.0 544.4 l3 -5 l1 -3.4 l1 3.4 l-1.4 1.8 l2.8 3.2 M920.8 541 l-1.4 1.8" stroke="#f4f4f4" stroke-width="1.1"/><circle cx="924.0" cy="536.6" r=".9" stroke="#f4f4f4" stroke-width=".5"/>
<circle cx="936.4" cy="540" r="2.6" stroke="#f4f4f4" stroke-width="1.6"/><path d="M936.4 535.8 v8.4 M932.2 540 h8.4 M933.4 537 l6 6 M939.4 537 l-6 6" stroke="#f4f4f4" stroke-width="1"/><circle cx="936.4" cy="540" r="1.1" fill="#474747"/>
<path d="M954 540 h8.2 M958.1 535.9 v8.2" stroke="#fafafa" stroke-width="1.1"/>
<rect x="968.8" y="535.6" width="3" height="3" stroke="#e4e4e4" stroke-width=".7"/><circle cx="975" cy="540.4" r="1.6" stroke="#e4e4e4" stroke-width=".7"/><path d="M969.6 544.6 l1.4 -2.6 l1.4 2.6 z" stroke="#e4e4e4" stroke-width=".6"/>
<rect x="983" y="535.6" width="5" height="3.4" fill="#5a9af0"/><rect x="984.2" y="538.4" width="4.6" height="5.6" fill="#e8e8e8"/><circle cx="988.8" cy="543.6" r="1.4" fill="#f0d040"/>
<rect x="996.6" y="536.6" width="7.6" height="6.2" stroke="#f0f0f0" stroke-width=".9"/><path d="M998 540.6 v1 h1.2 M1002.8 538.8 v-1 h-1.2" stroke="#f0f0f0" stroke-width=".7"/>
<path d="M1010.2 537 h7 M1010.2 540 h7 M1010.2 543 h7" stroke="#fafafa" stroke-width="1.1"/>
<path d="M9.6 533.4 h28.2 q1.4 0 2 1.6 l2.2 5.8 q.6 1.6 -1.4 1.6 h-24.6 q-1.6 0 -2.2 -1.4 l-2.8 -6.2 q-.6 -1.4 -1.4 -1.4 z" fill="#555" stroke="#666" stroke-width=".5"/>
<path d="M40.8 533.4 h33.4 q2 0 1.2 1.6 l-2.6 6 q-.6 1.4 -2.2 1.4 h-24.6 q-1.6 0 -2.2 -1.4 l-2.6 -6 q-.6 -1.6 -.4 -1.6 z" fill="#6e6e6e" stroke="#858585" stroke-width=".5"/>
<path d="M80.6 534.6 h9 q1.4 0 .8 1.2 l-1.8 4 q-.5 1 -1.6 1 h-7 q-1.4 0 -.9 -1 l.6 -4 q.2 -1.2 .9 -1.2 z" fill="#585858"/>
<path d="M82.6 537.8 h4.4 M84.8 535.6 v4.4" stroke="#eee" stroke-width=".9"/>
</svg>
<span class="t tc " style="left:25.5px;top:533.3px;color:#bcbcbc;font-size:6.6px">Model</span>
<span class="t tc " style="left:58.6px;top:533.3px;color:#fff;font-weight:bold;font-size:6.6px">Layout1</span>
<span class="t " style="left:778.8px;top:535.5px;color:#fff;font-weight:bold;font-size:6.5px;letter-spacing:-.2px;transform:scaleX(.86);transform-origin:0 50%">PAPER</span>
<div class="a" style="left:1021px;top:0px;width:3px;height:200px;background:#251512;"></div>
<div class="a" style="left:1021px;top:200px;width:3px;height:118px;background:#8f8686;"></div>
<div class="a" style="left:1021px;top:318px;width:3px;height:89px;background:#efe8e8;"></div>
<div class="a" style="left:1021px;top:407px;width:3px;height:141px;background:#241515;"></div>
<div class="a" style="left:1021px;top:374.4px;width:3px;height:1.4px;background:#5a78c8;"></div>
</body>
</html>
